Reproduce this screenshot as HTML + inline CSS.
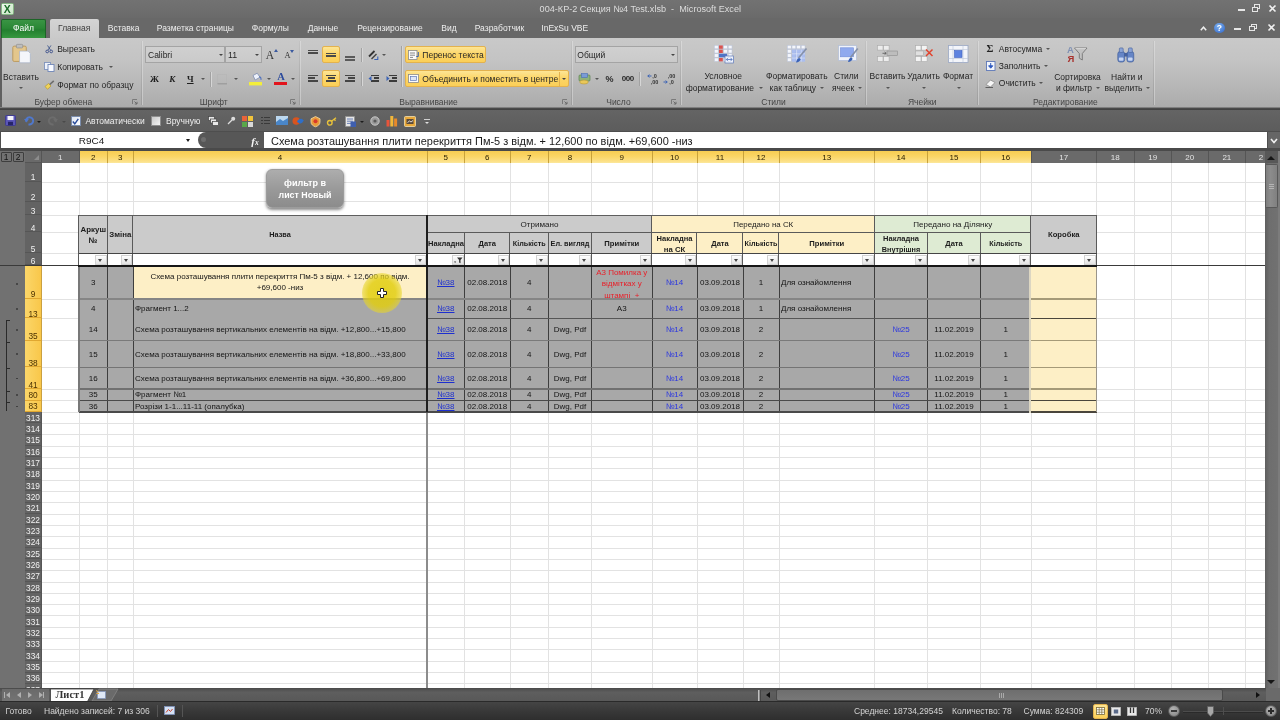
<!DOCTYPE html>
<html lang="ru"><head><meta charset="utf-8"><title>004-КР-2 Секция №4 Test.xlsb - Microsoft Excel</title>
<style>
*{box-sizing:border-box;margin:0;padding:0}
html,body{width:1280px;height:720px;overflow:hidden;background:#fff}
body{position:relative;font-family:"Liberation Sans",sans-serif;font-size:8.6px;color:#2a2a2a}
#app{position:absolute;left:0;top:0;width:1280px;height:720px;overflow:hidden;will-change:transform}
.a{position:absolute}
.t{position:absolute;white-space:nowrap}
svg{overflow:visible}
</style></head>
<body>
<div id="app">

<!-- title bar -->
<div class="a" style="left:0px;top:0px;width:1280px;height:18px;background:linear-gradient(#727272,#6a6a6a);"></div>
<div class="a" style="left:1px;top:2.500px;width:12.500px;height:12.500px;background:linear-gradient(135deg,#eef9ec,#c9e6c6);border:1px solid #86b884;border-radius:1.500px"></div>
<div class="t" style="left:7.3px;top:3.00px;line-height:12px;font-size:10.5px;color:#1b6a28;font-weight:bold;transform:translateX(-50%);">X</div>
<div class="t" style="left:640.3px;top:3.00px;line-height:12px;font-size:9.12px;color:#dcdcdc;transform:translateX(-50%);">004-КР-2 Секция №4 Test.xlsb  -  Microsoft Excel</div>
<div class="a" style="left:1238.0px;top:8.5px;width:7px;height:2px;background:#e6e6e6;"></div>
<div class="a" style="left:1254.0px;top:4px;width:6px;height:5px;border:1px solid #e6e6e6;border-top-width:1.5px"></div>
<div class="a" style="left:1252.0px;top:6.5px;width:6px;height:5px;border:1px solid #e6e6e6;border-top-width:1.5px;background:#6a6a6a"></div>
<svg class="a" style="left:1268.5px;top:4.5px;" width="7" height="7" viewBox="0 0 7 7"><path d="M0.5 0.5L6.5 6.5M6.5 0.5L0.5 6.5" stroke="#f0f0f0" stroke-width="1.6"/></svg>
<!-- ribbon tabs -->
<div class="a" style="left:0px;top:18px;width:1280px;height:20px;background:#686868;"></div>
<div class="a" style="left:0.5px;top:18.5px;width:45.500px;height:19.5px;border-radius:2px 2px 0 0;background:linear-gradient(#3a9444,#2b8836 45%,#237f2f 55%,#36983f);border:1px solid #1c6426;border-bottom:none"></div>
<div class="t" style="left:23.5px;top:22.30px;line-height:12px;font-size:8.5px;color:#fff;transform:translateX(-50%);">Файл</div>
<div class="a" style="left:50px;top:19px;width:48.5px;height:19.5px;border-radius:2px 2px 0 0;background:linear-gradient(#d4d4d4,#c9c9c9)"></div>
<div class="t" style="left:74.2px;top:22.30px;line-height:12px;font-size:8.5px;color:#3c3c3c;transform:translateX(-50%);">Главная</div>
<div class="t" style="left:123.65px;top:22.30px;line-height:12px;font-size:8.5px;color:#eeeeee;transform:translateX(-50%);">Вставка</div>
<div class="t" style="left:195.39999999999998px;top:22.30px;line-height:12px;font-size:8.5px;color:#eeeeee;transform:translateX(-50%);">Разметка страницы</div>
<div class="t" style="left:270.25px;top:22.30px;line-height:12px;font-size:8.5px;color:#eeeeee;transform:translateX(-50%);">Формулы</div>
<div class="t" style="left:323.0px;top:22.30px;line-height:12px;font-size:8.5px;color:#eeeeee;transform:translateX(-50%);">Данные</div>
<div class="t" style="left:390.0px;top:22.30px;line-height:12px;font-size:8.5px;color:#eeeeee;transform:translateX(-50%);">Рецензирование</div>
<div class="t" style="left:449.0px;top:22.30px;line-height:12px;font-size:8.5px;color:#eeeeee;transform:translateX(-50%);">Вид</div>
<div class="t" style="left:499.5px;top:22.30px;line-height:12px;font-size:8.5px;color:#eeeeee;transform:translateX(-50%);">Разработчик</div>
<div class="t" style="left:564.75px;top:22.30px;line-height:12px;font-size:8.5px;color:#eeeeee;transform:translateX(-50%);">InExSu VBE</div>
<svg class="a" style="left:1199.5px;top:25.5px;" width="7" height="5" viewBox="0 0 7 5"><path d="M0.8 4.2L3.5 1.2L6.2 4.2" stroke="#eee" stroke-width="1.5" fill="none"/></svg>
<div class="a" style="left:1214px;top:22.5px;width:10.5px;height:10.5px;border-radius:50%;background:radial-gradient(circle at 40% 30%,#7fb2ee,#2d63c8)"></div>
<div class="t" style="left:1219.3px;top:22.00px;line-height:12px;font-size:8.5px;color:#fff;font-weight:bold;transform:translateX(-50%);">?</div>
<div class="a" style="left:1233.5px;top:28.0px;width:7px;height:2px;background:#e6e6e6;"></div>
<div class="a" style="left:1251.0px;top:23.5px;width:6px;height:5px;border:1px solid #e6e6e6;border-top-width:1.5px"></div>
<div class="a" style="left:1249.0px;top:26.0px;width:6px;height:5px;border:1px solid #e6e6e6;border-top-width:1.5px;background:#6a6a6a"></div>
<svg class="a" style="left:1268.0px;top:24.0px;" width="7" height="7" viewBox="0 0 7 7"><path d="M0.5 0.5L6.5 6.5M6.5 0.5L0.5 6.5" stroke="#f0f0f0" stroke-width="1.6"/></svg>
<!-- ribbon -->
<div class="a" style="left:0px;top:38px;width:1280px;height:70px;background:linear-gradient(#c9c9c9,#c4c4c4 30%,#b6b6b6 70%,#ababab);"></div>
<div class="a" style="left:0px;top:106.5px;width:1280px;height:3.5px;background:linear-gradient(#9a9a9a,#4a4a4a 50%,#3e3e3e);"></div>
<div class="a" style="left:0px;top:38px;width:1.5px;height:69px;background:#606060;"></div>
<svg class="a" style="left:11px;top:42.5px;" width="23.4" height="21.6" viewBox="0 0 26 24"><rect x="2" y="3.5" width="15" height="17" rx="1.5" fill="#e3c68c" stroke="#b9965a" stroke-width="1"/><rect x="6" y="1.5" width="7" height="4" rx="1" fill="#bdbdbd" stroke="#8a8a8a" stroke-width=".7"/><path d="M9.5 9h9.5l2.5 2.5V22h-12z" fill="#f4f6fa" stroke="#a9b4c6" stroke-width=".8"/></svg>
<div class="t" style="left:21px;top:70.80px;line-height:12px;font-size:8.5px;color:#262626;transform:translateX(-50%);">Вставить</div>
<div class="a" style="left:19px;top:87.00px;width:0;height:0;border-left:2px solid transparent;border-right:2px solid transparent;border-top:2.5px solid #555"></div>
<svg class="a" style="left:44.5px;top:44.5px;" width="8.5" height="8.5" viewBox="0 0 10 10"><path d="M3 0.5L6.5 6M7 0.5L3.5 6" stroke="#4a5f90" stroke-width="1.1" fill="none"/><circle cx="2.6" cy="7.6" r="1.6" fill="none" stroke="#3c4f8a" stroke-width="1.1"/><circle cx="7.3" cy="7.6" r="1.6" fill="none" stroke="#3c4f8a" stroke-width="1.1"/></svg>
<div class="t" style="left:57.2px;top:43.00px;line-height:12px;font-size:8.5px;color:#262626;">Вырезать</div>
<svg class="a" style="left:43.5px;top:62px;" width="11" height="10" viewBox="0 0 11 10"><rect x="0.5" y="0.5" width="6" height="7" fill="#eef2fa" stroke="#7f93bd" stroke-width=".9"/><rect x="4" y="2.5" width="6" height="7" fill="#f8faff" stroke="#6f86b8" stroke-width=".9"/></svg>
<div class="t" style="left:57.2px;top:61.00px;line-height:12px;font-size:8.5px;color:#262626;">Копировать</div>
<div class="a" style="left:109px;top:66.30px;width:0;height:0;border-left:2px solid transparent;border-right:2px solid transparent;border-top:2.5px solid #555"></div>
<svg class="a" style="left:43.5px;top:80px;" width="11" height="10" viewBox="0 0 11 10"><path d="M9.8 0.8L5.2 5" stroke="#6d6d6d" stroke-width="1.6"/><path d="M1 6.5L4.5 3.5L7 6L3.5 9.3z" fill="#f0d35a" stroke="#b89a2e" stroke-width=".7"/></svg>
<div class="t" style="left:57.2px;top:79.00px;line-height:12px;font-size:8.5px;color:#262626;">Формат по образцу</div>
<div class="t" style="left:63.35px;top:95.60px;line-height:12px;font-size:8.5px;color:#444444;transform:translateX(-50%);">Буфер обмена</div>
<svg class="a" style="left:132px;top:98.5px;" width="6" height="6" viewBox="0 0 6 6"><path d="M0.5 5V0.5H5" stroke="#7a7a7a" fill="none" stroke-width="1"/><path d="M2.5 2.5L5 5M5 2.8V5H2.8" stroke="#6a6a6a" fill="none" stroke-width="1"/></svg>
<div class="a" style="left:140.5px;top:41px;width:1px;height:64px;background:linear-gradient(#c2c2c2,#9c9c9c);"></div>
<div class="a" style="left:141.5px;top:41px;width:1px;height:64px;background:linear-gradient(#d8d8d8,#c6c6c6);"></div>
<div class="a" style="left:145.3px;top:46.3px;width:80px;height:17px;background:linear-gradient(#d0d0d0,#cacaca);border:1px solid #a4a4a4"></div>
<div class="a" style="left:224.8px;top:46.3px;width:37px;height:17px;background:linear-gradient(#d0d0d0,#cacaca);border:1px solid #a4a4a4"></div>
<div class="t" style="left:148px;top:48.80px;line-height:12px;font-size:8.5px;color:#262626;">Calibri</div>
<div class="a" style="left:218.5px;top:54.00px;width:0;height:0;border-left:2px solid transparent;border-right:2px solid transparent;border-top:2.5px solid #444"></div>
<div class="t" style="left:228px;top:48.80px;line-height:12px;font-size:8.8px;color:#262626;">11</div>
<div class="a" style="left:255px;top:54.00px;width:0;height:0;border-left:2px solid transparent;border-right:2px solid transparent;border-top:2.5px solid #444"></div>
<div class="t" style="left:270px;top:49.30px;line-height:12px;font-size:11.5px;color:#333;transform:translateX(-50%);font-family:'Liberation Serif',serif;">A</div>
<svg class="a" style="left:273.5px;top:49px;" width="4" height="3" viewBox="0 0 4 3"><path d="M0 3L2 0L4 3z" fill="#3b5aa0"/></svg>
<div class="t" style="left:287.5px;top:50.30px;line-height:12px;font-size:8.3px;color:#333;transform:translateX(-50%);font-family:'Liberation Serif',serif;">A</div>
<svg class="a" style="left:290.3px;top:49.5px;" width="4" height="3" viewBox="0 0 4 3"><path d="M0 0L2 3L4 0z" fill="#3b5aa0"/></svg>
<div class="t" style="left:154.5px;top:72.80px;line-height:12px;font-size:9px;color:#1e1e1e;font-weight:bold;transform:translateX(-50%);font-family:'Liberation Serif',serif;">Ж</div>
<div class="t" style="left:172.3px;top:72.80px;line-height:12px;font-size:9px;color:#1e1e1e;font-weight:bold;transform:translateX(-50%);font-family:'Liberation Serif',serif;font-style:italic;">К</div>
<div class="t" style="left:190.3px;top:72.80px;line-height:12px;font-size:9px;color:#1e1e1e;font-weight:bold;transform:translateX(-50%);font-family:'Liberation Serif',serif;text-decoration:underline;">Ч</div>
<div class="a" style="left:201px;top:78.30px;width:0;height:0;border-left:2px solid transparent;border-right:2px solid transparent;border-top:2.5px solid #555"></div>
<div class="a" style="left:210.0px;top:72px;width:1px;height:15px;background:#a2a2a2;"></div>
<div class="a" style="left:211.0px;top:72px;width:1px;height:15px;background:#d6d6d6;"></div>
<svg class="a" style="left:217px;top:73.5px;" width="11" height="11" viewBox="0 0 11 11"><rect x="0.5" y="0.5" width="9" height="9" fill="none" stroke="#b0b0b0" stroke-dasharray="1 1" stroke-width=".8"/><path d="M0.5 9.8H10" stroke="#9a9a9a" stroke-width="1.2"/></svg>
<div class="a" style="left:234px;top:78.30px;width:0;height:0;border-left:2px solid transparent;border-right:2px solid transparent;border-top:2.5px solid #555"></div>
<svg class="a" style="left:249px;top:72px;" width="14" height="14" viewBox="0 0 14 14"><path d="M4 3.5L8.2 1.2L11 5.2L6.2 8z" fill="#eef2fb" stroke="#7d8db0" stroke-width=".8"/><path d="M10.5 4.5c1.4 1 1.8 2.3 1.5 3.4" stroke="#4b6fc0" stroke-width="1.1" fill="none"/><rect x="0" y="10" width="13" height="3.4" fill="#f3ee3a"/></svg>
<div class="a" style="left:266.5px;top:78.30px;width:0;height:0;border-left:2px solid transparent;border-right:2px solid transparent;border-top:2.5px solid #555"></div>
<div class="t" style="left:281px;top:71.30px;line-height:12px;font-size:10.5px;color:#2b4a9c;font-weight:bold;transform:translateX(-50%);font-family:'Liberation Serif',serif;">A</div>
<div class="a" style="left:274.3px;top:82px;width:13px;height:3.4px;background:#e2141c;"></div>
<div class="a" style="left:291.3px;top:78.30px;width:0;height:0;border-left:2px solid transparent;border-right:2px solid transparent;border-top:2.5px solid #555"></div>
<div class="t" style="left:213.7px;top:95.60px;line-height:12px;font-size:8.5px;color:#444444;transform:translateX(-50%);">Шрифт</div>
<svg class="a" style="left:290px;top:98.5px;" width="6" height="6" viewBox="0 0 6 6"><path d="M0.5 5V0.5H5" stroke="#7a7a7a" fill="none" stroke-width="1"/><path d="M2.5 2.5L5 5M5 2.8V5H2.8" stroke="#6a6a6a" fill="none" stroke-width="1"/></svg>
<div class="a" style="left:299.0px;top:41px;width:1px;height:64px;background:linear-gradient(#c2c2c2,#9c9c9c);"></div>
<div class="a" style="left:300.0px;top:41px;width:1px;height:64px;background:linear-gradient(#d8d8d8,#c6c6c6);"></div>
<div class="a" style="left:321.8px;top:46.3px;width:18.5px;height:17px;background:linear-gradient(#fde595,#fcd566 50%,#fbcf58);border:1px solid #e3b24e;border-radius:2px"></div>
<div class="a" style="left:321.8px;top:70.3px;width:18.5px;height:17px;background:linear-gradient(#fde595,#fcd566 50%,#fbcf58);border:1px solid #e3b24e;border-radius:2px"></div>
<div class="a" style="left:308px;top:49.5px;width:10px;height:1.8px;background:#4a4a4a;"></div>
<div class="a" style="left:308px;top:52.3px;width:10px;height:1.8px;background:#4a4a4a;"></div>
<div class="a" style="left:326px;top:52.5px;width:10px;height:1.8px;background:#4a4a4a;"></div>
<div class="a" style="left:326px;top:55.3px;width:10px;height:1.8px;background:#4a4a4a;"></div>
<div class="a" style="left:345px;top:56px;width:10px;height:1.8px;background:#5a5a5a;"></div>
<div class="a" style="left:345px;top:58.8px;width:10px;height:1.8px;background:#5a5a5a;"></div>
<div class="a" style="left:360.5px;top:48px;width:1px;height:14px;background:#a2a2a2;"></div>
<div class="a" style="left:361.5px;top:48px;width:1px;height:14px;background:#d6d6d6;"></div>
<svg class="a" style="left:368px;top:49.5px;" width="11" height="10" viewBox="0 0 11 10"><path d="M1 6.500L6.500 1" stroke="#333" stroke-width="1.800"/><path d="M3.500 9L8.500 4" stroke="#444" stroke-width="1.500"/><path d="M6.3 9.5h3.5v-3" stroke="#3a62b5" stroke-width="1.1" fill="none"/></svg>
<div class="a" style="left:381.5px;top:54.00px;width:0;height:0;border-left:2px solid transparent;border-right:2px solid transparent;border-top:2.5px solid #555"></div>
<div class="a" style="left:308px;top:74.5px;width:10px;height:1.7px;background:#454545;"></div>
<div class="a" style="left:308px;top:77.4px;width:7px;height:1.7px;background:#454545;"></div>
<div class="a" style="left:308px;top:80.3px;width:10px;height:1.7px;background:#454545;"></div>
<div class="a" style="left:326px;top:74.5px;width:10px;height:1.7px;background:#454545;"></div>
<div class="a" style="left:327.5px;top:77.4px;width:7px;height:1.7px;background:#454545;"></div>
<div class="a" style="left:326px;top:80.3px;width:10px;height:1.7px;background:#454545;"></div>
<div class="a" style="left:345px;top:74.5px;width:10px;height:1.7px;background:#454545;"></div>
<div class="a" style="left:348px;top:77.4px;width:7px;height:1.7px;background:#454545;"></div>
<div class="a" style="left:345px;top:80.3px;width:10px;height:1.7px;background:#454545;"></div>
<div class="a" style="left:360.5px;top:72px;width:1px;height:14px;background:#a2a2a2;"></div>
<div class="a" style="left:361.5px;top:72px;width:1px;height:14px;background:#d6d6d6;"></div>
<div class="a" style="left:371px;top:74.5px;width:8px;height:1.7px;background:#3a3a3a;"></div>
<div class="a" style="left:374px;top:77.4px;width:5px;height:1.7px;background:#3a3a3a;"></div>
<div class="a" style="left:371px;top:80.3px;width:8px;height:1.7px;background:#3a3a3a;"></div>
<svg class="a" style="left:367.5px;top:76px;" width="4" height="5" viewBox="0 0 4 5"><path d="M3.5 0L0.5 2.5L3.5 5z" fill="#3a62b5"/></svg>
<div class="a" style="left:388.5px;top:74.5px;width:8px;height:1.7px;background:#3a3a3a;"></div>
<div class="a" style="left:391.5px;top:77.4px;width:5px;height:1.7px;background:#3a3a3a;"></div>
<div class="a" style="left:388.5px;top:80.3px;width:8px;height:1.7px;background:#3a3a3a;"></div>
<svg class="a" style="left:385.5px;top:76px;" width="4" height="5" viewBox="0 0 4 5"><path d="M0.5 0L3.5 2.5L0.5 5z" fill="#3a62b5"/></svg>
<div class="a" style="left:400.8px;top:46px;width:1px;height:41px;background:#a2a2a2;"></div>
<div class="a" style="left:401.8px;top:46px;width:1px;height:41px;background:#d6d6d6;"></div>
<div class="a" style="left:405px;top:46.3px;width:80.5px;height:17px;background:linear-gradient(#fde595,#fcd566 50%,#fbcf58);border:1px solid #e3b24e;border-radius:2px"></div>
<svg class="a" style="left:408px;top:49.5px;" width="11" height="10" viewBox="0 0 11 10"><rect x="0.5" y="0.5" width="8.5" height="9" fill="#fbfbfb" stroke="#8a8a8a" stroke-width=".8"/><path d="M2 3h5M2 5.2h5M2 7.4h3" stroke="#6a6a6a" stroke-width=".8"/><path d="M10.3 2v4.5h-2" stroke="#3a62b5" stroke-width="1" fill="none"/></svg>
<div class="t" style="left:422.3px;top:48.80px;line-height:12px;font-size:8.5px;color:#262626;">Перенос текста</div>
<div class="a" style="left:405px;top:70.3px;width:163.5px;height:17px;background:linear-gradient(#fde595,#fcd566 50%,#fbcf58);border:1px solid #e3b24e;border-radius:2px"></div>
<div class="a" style="left:559.3px;top:71.5px;width:1px;height:14.5px;background:#e3b24e;"></div>
<svg class="a" style="left:408px;top:74px;" width="11" height="9" viewBox="0 0 11 9"><rect x="0.5" y="0.5" width="10" height="8" fill="#fbfbfb" stroke="#8a8a8a" stroke-width=".8"/><rect x="2.5" y="2.5" width="6" height="4" fill="#dfe6f5" stroke="#5d78b8" stroke-width=".7"/></svg>
<div class="t" style="left:422.3px;top:72.80px;line-height:12px;font-size:8.5px;color:#262626;">Объединить и поместить в центре</div>
<div class="a" style="left:562px;top:78.30px;width:0;height:0;border-left:2px solid transparent;border-right:2px solid transparent;border-top:2.5px solid #444"></div>
<div class="t" style="left:428.5px;top:95.60px;line-height:12px;font-size:8.5px;color:#444444;transform:translateX(-50%);">Выравнивание</div>
<svg class="a" style="left:561.5px;top:98.5px;" width="6" height="6" viewBox="0 0 6 6"><path d="M0.5 5V0.5H5" stroke="#7a7a7a" fill="none" stroke-width="1"/><path d="M2.5 2.5L5 5M5 2.8V5H2.8" stroke="#6a6a6a" fill="none" stroke-width="1"/></svg>
<div class="a" style="left:570.5px;top:41px;width:1px;height:64px;background:linear-gradient(#c2c2c2,#9c9c9c);"></div>
<div class="a" style="left:571.5px;top:41px;width:1px;height:64px;background:linear-gradient(#d8d8d8,#c6c6c6);"></div>
<div class="a" style="left:574.6px;top:46.3px;width:103.2px;height:17px;background:linear-gradient(#d0d0d0,#cacaca);border:1px solid #a4a4a4"></div>
<div class="t" style="left:577.3px;top:48.80px;line-height:12px;font-size:8.5px;color:#262626;">Общий</div>
<div class="a" style="left:671px;top:54.00px;width:0;height:0;border-left:2px solid transparent;border-right:2px solid transparent;border-top:2.5px solid #444"></div>
<svg class="a" style="left:578px;top:72.5px;" width="13" height="12" viewBox="0 0 13 12"><rect x="1" y="2" width="11" height="6" rx="1" fill="#8fb27a" stroke="#5d8450" stroke-width=".7"/><ellipse cx="6" cy="9" rx="4.3" ry="2" fill="#e9c85a" stroke="#b7973a" stroke-width=".6"/><rect x="3.5" y="0.5" width="6" height="4" fill="#7a9bd6" stroke="#4a6fb5" stroke-width=".6"/></svg>
<div class="a" style="left:594.5px;top:78.30px;width:0;height:0;border-left:2px solid transparent;border-right:2px solid transparent;border-top:2.5px solid #555"></div>
<div class="t" style="left:609.5px;top:73.00px;line-height:12px;font-size:9px;color:#2a2a2a;font-weight:bold;transform:translateX(-50%);">%</div>
<div class="t" style="left:627.7px;top:73.00px;line-height:12px;font-size:8px;color:#2a2a2a;font-weight:bold;transform:translateX(-50%);letter-spacing:-0.5px;">000</div>
<div class="a" style="left:638.8px;top:72px;width:1px;height:14px;background:#a2a2a2;"></div>
<div class="a" style="left:639.8px;top:72px;width:1px;height:14px;background:#d6d6d6;"></div>
<div class="t" style="left:654.5px;top:70.30px;line-height:12px;font-size:5.5px;color:#333;font-weight:bold;transform:translateX(-50%);">,0</div>
<div class="t" style="left:654.5px;top:76.00px;line-height:12px;font-size:5.5px;color:#333;font-weight:bold;transform:translateX(-50%);">,00</div>
<svg class="a" style="left:646.5px;top:74px;" width="5" height="4" viewBox="0 0 5 4"><path d="M4.5 2H0.8M2.3 0.5L0.8 2L2.3 3.5" stroke="#3a62b5" stroke-width="1" fill="none"/></svg>
<div class="t" style="left:671.5px;top:70.30px;line-height:12px;font-size:5.5px;color:#333;font-weight:bold;transform:translateX(-50%);">,00</div>
<div class="t" style="left:671.5px;top:76.00px;line-height:12px;font-size:5.5px;color:#333;font-weight:bold;transform:translateX(-50%);">,0</div>
<svg class="a" style="left:663px;top:80px;" width="5" height="4" viewBox="0 0 5 4"><path d="M0.5 2H4.2M2.7 0.5L4.2 2L2.7 3.5" stroke="#3a62b5" stroke-width="1" fill="none"/></svg>
<div class="t" style="left:618.45px;top:95.60px;line-height:12px;font-size:8.5px;color:#444444;transform:translateX(-50%);">Число</div>
<svg class="a" style="left:670.5px;top:98.5px;" width="6" height="6" viewBox="0 0 6 6"><path d="M0.5 5V0.5H5" stroke="#7a7a7a" fill="none" stroke-width="1"/><path d="M2.5 2.5L5 5M5 2.8V5H2.8" stroke="#6a6a6a" fill="none" stroke-width="1"/></svg>
<div class="a" style="left:680.1px;top:41px;width:1px;height:64px;background:linear-gradient(#c2c2c2,#9c9c9c);"></div>
<div class="a" style="left:681.1px;top:41px;width:1px;height:64px;background:linear-gradient(#d8d8d8,#c6c6c6);"></div>
<svg class="a" style="left:713.5px;top:45px;" width="20" height="19" viewBox="0 0 20 19"><rect x="0.4" y="0.4" width="3.8" height="3.4" fill="#f4f6fb" stroke="#b9c3d9" stroke-width=".5"/><rect x="5.0" y="0.4" width="3.8" height="3.4" fill="#f4f6fb" stroke="#b9c3d9" stroke-width=".5"/><rect x="9.6" y="0.4" width="3.8" height="3.4" fill="#f4f6fb" stroke="#b9c3d9" stroke-width=".5"/><rect x="14.2" y="0.4" width="3.8" height="3.4" fill="#f4f6fb" stroke="#b9c3d9" stroke-width=".5"/><rect x="0.4" y="4.6" width="3.8" height="3.4" fill="#f4f6fb" stroke="#b9c3d9" stroke-width=".5"/><rect x="5.0" y="4.6" width="3.8" height="3.4" fill="#f4f6fb" stroke="#b9c3d9" stroke-width=".5"/><rect x="9.6" y="4.6" width="3.8" height="3.4" fill="#f4f6fb" stroke="#b9c3d9" stroke-width=".5"/><rect x="14.2" y="4.6" width="3.8" height="3.4" fill="#f4f6fb" stroke="#b9c3d9" stroke-width=".5"/><rect x="0.4" y="8.8" width="3.8" height="3.4" fill="#f4f6fb" stroke="#b9c3d9" stroke-width=".5"/><rect x="5.0" y="8.8" width="3.8" height="3.4" fill="#f4f6fb" stroke="#b9c3d9" stroke-width=".5"/><rect x="9.6" y="8.8" width="3.8" height="3.4" fill="#f4f6fb" stroke="#b9c3d9" stroke-width=".5"/><rect x="14.2" y="8.8" width="3.8" height="3.4" fill="#f4f6fb" stroke="#b9c3d9" stroke-width=".5"/><rect x="0.4" y="13.0" width="3.8" height="3.4" fill="#f4f6fb" stroke="#b9c3d9" stroke-width=".5"/><rect x="5.0" y="13.0" width="3.8" height="3.4" fill="#f4f6fb" stroke="#b9c3d9" stroke-width=".5"/><rect x="9.6" y="13.0" width="3.8" height="3.4" fill="#f4f6fb" stroke="#b9c3d9" stroke-width=".5"/><rect x="14.2" y="13.0" width="3.8" height="3.4" fill="#f4f6fb" stroke="#b9c3d9" stroke-width=".5"/><rect x="5" y="0.4" width="3.8" height="3.4" fill="#d9534f"/><rect x="5" y="4.6" width="3.8" height="3.4" fill="#d9534f"/><rect x="5" y="8.8" width="8" height="3.4" fill="#4f74c8"/><rect x="5" y="13" width="3.8" height="3.4" fill="#d9534f"/><rect x="11" y="11" width="8.5" height="7" fill="#eef2fb" stroke="#5d78b8" stroke-width=".7"/><path d="M12.5 14.5h5.5M14 12.8l-1.6 1.7 1.6 1.7M16.5 12.8l1.6 1.7-1.6 1.7" stroke="#3a62b5" stroke-width=".7" fill="none"/></svg>
<div class="t" style="left:723.2px;top:70.40px;line-height:12px;font-size:8.5px;color:#262626;transform:translateX(-50%);">Условное</div>
<div class="t" style="left:719.8px;top:81.70px;line-height:12px;font-size:8.5px;color:#262626;transform:translateX(-50%);">форматирование</div>
<div class="a" style="left:758.5px;top:87.00px;width:0;height:0;border-left:2px solid transparent;border-right:2px solid transparent;border-top:2.5px solid #555"></div>
<svg class="a" style="left:787px;top:45px;" width="21" height="19" viewBox="0 0 21 19"><rect x="0.4" y="0.4" width="3.8" height="3.4" fill="#f4f6fb" stroke="#b9c3d9" stroke-width=".5"/><rect x="5.0" y="0.4" width="3.8" height="3.4" fill="#f4f6fb" stroke="#b9c3d9" stroke-width=".5"/><rect x="9.6" y="0.4" width="3.8" height="3.4" fill="#f4f6fb" stroke="#b9c3d9" stroke-width=".5"/><rect x="14.2" y="0.4" width="3.8" height="3.4" fill="#f4f6fb" stroke="#b9c3d9" stroke-width=".5"/><rect x="0.4" y="4.6" width="3.8" height="3.4" fill="#f4f6fb" stroke="#b9c3d9" stroke-width=".5"/><rect x="5.0" y="4.6" width="3.8" height="3.4" fill="#f4f6fb" stroke="#b9c3d9" stroke-width=".5"/><rect x="9.6" y="4.6" width="3.8" height="3.4" fill="#f4f6fb" stroke="#b9c3d9" stroke-width=".5"/><rect x="14.2" y="4.6" width="3.8" height="3.4" fill="#f4f6fb" stroke="#b9c3d9" stroke-width=".5"/><rect x="0.4" y="8.8" width="3.8" height="3.4" fill="#f4f6fb" stroke="#b9c3d9" stroke-width=".5"/><rect x="5.0" y="8.8" width="3.8" height="3.4" fill="#f4f6fb" stroke="#b9c3d9" stroke-width=".5"/><rect x="9.6" y="8.8" width="3.8" height="3.4" fill="#f4f6fb" stroke="#b9c3d9" stroke-width=".5"/><rect x="14.2" y="8.8" width="3.8" height="3.4" fill="#f4f6fb" stroke="#b9c3d9" stroke-width=".5"/><rect x="0.4" y="13.0" width="3.8" height="3.4" fill="#f4f6fb" stroke="#b9c3d9" stroke-width=".5"/><rect x="5.0" y="13.0" width="3.8" height="3.4" fill="#f4f6fb" stroke="#b9c3d9" stroke-width=".5"/><rect x="9.6" y="13.0" width="3.8" height="3.4" fill="#f4f6fb" stroke="#b9c3d9" stroke-width=".5"/><rect x="14.2" y="13.0" width="3.8" height="3.4" fill="#f4f6fb" stroke="#b9c3d9" stroke-width=".5"/><rect x="5" y="4.600" width="13" height="12" fill="#9fb4ec" opacity=".85"/><path d="M5 8.800h13M5 13h13M9.600 4.600v12M14.200 4.600v12" stroke="#e8eefc" stroke-width=".6"/><path d="M19.5 3.5L11.5 13" stroke="#8590a8" stroke-width="1.7"/><path d="M9 17.5c0.5-2.5 1.5-4 3.2-4.6l1.5 1.3c-0.8 1.8-2.2 3-4.7 3.3z" fill="#3a62b5"/></svg>
<div class="t" style="left:796.8px;top:70.40px;line-height:12px;font-size:8.5px;color:#262626;transform:translateX(-50%);">Форматировать</div>
<div class="t" style="left:792.8px;top:81.70px;line-height:12px;font-size:8.5px;color:#262626;transform:translateX(-50%);">как таблицу</div>
<div class="a" style="left:820px;top:87.00px;width:0;height:0;border-left:2px solid transparent;border-right:2px solid transparent;border-top:2.5px solid #555"></div>
<svg class="a" style="left:837.5px;top:45px;" width="21" height="19" viewBox="0 0 21 19"><rect x="0.5" y="0.5" width="18" height="15" fill="#f0f3fb" stroke="#b5c0d8" stroke-width=".8"/><rect x="2.5" y="2.8" width="13" height="9" fill="#8fa9ee" stroke="#6f8ad6" stroke-width=".6"/><path d="M19.8 3.5L12.5 12.5" stroke="#8590a8" stroke-width="1.7"/><path d="M10 17c0.5-2.5 1.5-4 3.2-4.6l1.5 1.3c-0.8 1.8-2.2 3-4.7 3.3z" fill="#3a62b5"/></svg>
<div class="t" style="left:846.3px;top:70.40px;line-height:12px;font-size:8.5px;color:#262626;transform:translateX(-50%);">Стили</div>
<div class="t" style="left:843px;top:81.70px;line-height:12px;font-size:8.5px;color:#262626;transform:translateX(-50%);">ячеек</div>
<div class="a" style="left:858px;top:87.00px;width:0;height:0;border-left:2px solid transparent;border-right:2px solid transparent;border-top:2.5px solid #555"></div>
<div class="t" style="left:773.5px;top:95.60px;line-height:12px;font-size:8.5px;color:#444444;transform:translateX(-50%);">Стили</div>
<div class="a" style="left:865.2px;top:41px;width:1px;height:64px;background:linear-gradient(#c2c2c2,#9c9c9c);"></div>
<div class="a" style="left:866.2px;top:41px;width:1px;height:64px;background:linear-gradient(#d8d8d8,#c6c6c6);"></div>
<svg class="a" style="left:877px;top:45px;" width="22" height="18" viewBox="0 0 22 18"><rect x="0.5" y="0.5" width="5.5" height="4.6" fill="#ececec" stroke="#aaa" stroke-width=".6"/><rect x="6.6" y="0.5" width="5.5" height="4.6" fill="#ececec" stroke="#aaa" stroke-width=".6"/><rect x="0.5" y="11.5" width="5.5" height="5" fill="#ececec" stroke="#aaa" stroke-width=".6"/><rect x="6.6" y="11.5" width="5.5" height="5" fill="#ececec" stroke="#aaa" stroke-width=".6"/><rect x="10" y="6" width="10.5" height="4.6" fill="#bdbdbd" stroke="#8e8e8e" stroke-width=".6"/><path d="M5.5 8.3h3.5M7.6 7l1.6 1.3-1.6 1.3" stroke="#555" stroke-width=".8" fill="none"/></svg>
<div class="t" style="left:887.5px;top:70.40px;line-height:12px;font-size:8.5px;color:#262626;transform:translateX(-50%);">Вставить</div>
<div class="a" style="left:886px;top:87.00px;width:0;height:0;border-left:2px solid transparent;border-right:2px solid transparent;border-top:2.5px solid #555"></div>
<svg class="a" style="left:915px;top:45px;" width="20" height="18" viewBox="0 0 20 18"><rect x="0.5" y="0.5" width="5.5" height="4.6" fill="#f4f4f4" stroke="#aaa" stroke-width=".6"/><rect x="6.6" y="0.5" width="5.5" height="4.6" fill="#f4f4f4" stroke="#aaa" stroke-width=".6"/><rect x="0.5" y="11.5" width="5.5" height="5" fill="#f4f4f4" stroke="#aaa" stroke-width=".6"/><rect x="6.6" y="11.5" width="5.5" height="5" fill="#f4f4f4" stroke="#aaa" stroke-width=".6"/><rect x="0.5" y="6" width="8" height="4.6" fill="#e0e0e0" stroke="#aaa" stroke-width=".6"/><path d="M11 4.5L17.5 11M17.5 4.5L11 11" stroke="#e0442e" stroke-width="1.5"/></svg>
<div class="t" style="left:923.6px;top:70.40px;line-height:12px;font-size:8.5px;color:#262626;transform:translateX(-50%);">Удалить</div>
<div class="a" style="left:922px;top:87.00px;width:0;height:0;border-left:2px solid transparent;border-right:2px solid transparent;border-top:2.5px solid #555"></div>
<svg class="a" style="left:948px;top:44.5px;" width="21" height="19" viewBox="0 0 21 19"><rect x="0.5" y="0.5" width="19.5" height="17" fill="#f3f5fa" stroke="#9aa7c4" stroke-width=".8"/><path d="M0.5 4.5H20M0.5 13.5H20M5 0.5V17.5M15 0.5V17.5" stroke="#b9c3d9" stroke-width=".6"/><rect x="6.5" y="5.5" width="7.5" height="7" fill="#5d82e0" stroke="#3f62c0" stroke-width=".6"/></svg>
<div class="t" style="left:958px;top:70.40px;line-height:12px;font-size:8.5px;color:#262626;transform:translateX(-50%);">Формат</div>
<div class="a" style="left:956.5px;top:87.00px;width:0;height:0;border-left:2px solid transparent;border-right:2px solid transparent;border-top:2.5px solid #555"></div>
<div class="t" style="left:922.2px;top:95.60px;line-height:12px;font-size:8.5px;color:#444444;transform:translateX(-50%);">Ячейки</div>
<div class="a" style="left:977.1px;top:41px;width:1px;height:64px;background:linear-gradient(#c2c2c2,#9c9c9c);"></div>
<div class="a" style="left:978.1px;top:41px;width:1px;height:64px;background:linear-gradient(#d8d8d8,#c6c6c6);"></div>
<div class="t" style="left:990px;top:42.60px;line-height:12px;font-size:10.5px;color:#222;font-weight:bold;transform:translateX(-50%);font-family:'Liberation Serif',serif;">Σ</div>
<div class="t" style="left:998.8px;top:42.60px;line-height:12px;font-size:8.5px;color:#262626;">Автосумма</div>
<div class="a" style="left:1045.5px;top:48.00px;width:0;height:0;border-left:2px solid transparent;border-right:2px solid transparent;border-top:2.5px solid #555"></div>
<svg class="a" style="left:985.5px;top:60.5px;" width="10" height="10" viewBox="0 0 10 10"><rect x="0.5" y="0.5" width="8.5" height="9" fill="#f3f6fc" stroke="#5d78b8" stroke-width=".9"/><path d="M4.7 2v4M2.6 4.8l2.1 2.4 2.1-2.4z" stroke="#2f5ac0" stroke-width="1" fill="#2f5ac0"/></svg>
<div class="t" style="left:998.8px;top:59.70px;line-height:12px;font-size:8.5px;color:#262626;">Заполнить</div>
<div class="a" style="left:1043.5px;top:65.00px;width:0;height:0;border-left:2px solid transparent;border-right:2px solid transparent;border-top:2.5px solid #555"></div>
<svg class="a" style="left:985px;top:78.5px;" width="11" height="9" viewBox="0 0 11 9"><path d="M1 5.5L5.5 1L10 3.5L5.5 8z" fill="#f7f7f7" stroke="#8a8a8a" stroke-width=".8"/><path d="M0.5 8.5H8" stroke="#555" stroke-width=".9"/></svg>
<div class="t" style="left:998.8px;top:77.00px;line-height:12px;font-size:8.5px;color:#262626;">Очистить</div>
<div class="a" style="left:1038.5px;top:82.30px;width:0;height:0;border-left:2px solid transparent;border-right:2px solid transparent;border-top:2.5px solid #555"></div>
<div class="t" style="left:1070.5px;top:44.30px;line-height:12px;font-size:9.5px;color:#7f90b4;font-weight:bold;transform:translateX(-50%);">А</div>
<div class="t" style="left:1070.8px;top:53.30px;line-height:12px;font-size:9.5px;color:#a8322e;font-weight:bold;transform:translateX(-50%);">Я</div>
<svg class="a" style="left:1074px;top:47px;" width="14" height="16" viewBox="0 0 14 16"><path d="M0.5 1h12.5l-4.7 5.5v6.500l-3 -1.800V6.5z" fill="#c2c2c2" stroke="#7c7c7c" stroke-width="1"/><path d="M1.500 1.600h10.500" stroke="#e8e8e8" stroke-width=".8"/></svg>
<div class="t" style="left:1077.5px;top:70.50px;line-height:12px;font-size:8.5px;color:#262626;transform:translateX(-50%);">Сортировка</div>
<div class="t" style="left:1074px;top:81.70px;line-height:12px;font-size:8.5px;color:#262626;transform:translateX(-50%);">и фильтр</div>
<div class="a" style="left:1095.5px;top:87.00px;width:0;height:0;border-left:2px solid transparent;border-right:2px solid transparent;border-top:2.5px solid #555"></div>
<svg class="a" style="left:1115.5px;top:46.5px;" width="20" height="16.4" viewBox="0 0 22 18"><rect x="2" y="5" width="7.5" height="11.5" rx="2.5" fill="#6585c6" stroke="#44609c" stroke-width=".8"/><rect x="12" y="5" width="7.5" height="11.5" rx="2.5" fill="#6585c6" stroke="#44609c" stroke-width=".8"/><rect x="3.7" y="1" width="4.2" height="5" rx="1" fill="#8aa3d6" stroke="#44609c" stroke-width=".7"/><rect x="13.7" y="1" width="4.2" height="5" rx="1" fill="#8aa3d6" stroke="#44609c" stroke-width=".7"/><rect x="8.8" y="6.5" width="4" height="4" fill="#46629e"/><rect x="3.2" y="11.5" width="5" height="3.6" rx="1" fill="#c7d6f3"/><rect x="13.2" y="11.5" width="5" height="3.6" rx="1" fill="#c7d6f3"/></svg>
<div class="t" style="left:1126.8px;top:70.50px;line-height:12px;font-size:8.5px;color:#262626;transform:translateX(-50%);">Найти и</div>
<div class="t" style="left:1123.5px;top:81.70px;line-height:12px;font-size:8.5px;color:#262626;transform:translateX(-50%);">выделить</div>
<div class="a" style="left:1145.5px;top:87.00px;width:0;height:0;border-left:2px solid transparent;border-right:2px solid transparent;border-top:2.5px solid #555"></div>
<div class="t" style="left:1065.35px;top:95.60px;line-height:12px;font-size:8.5px;color:#444444;transform:translateX(-50%);">Редактирование</div>
<div class="a" style="left:1152.5px;top:41px;width:1px;height:64px;background:linear-gradient(#c2c2c2,#9c9c9c);"></div>
<div class="a" style="left:1153.5px;top:41px;width:1px;height:64px;background:linear-gradient(#d8d8d8,#c6c6c6);"></div>
<!-- quick access toolbar -->
<div class="a" style="left:0px;top:109.5px;width:1280px;height:22.5px;background:linear-gradient(#646464,#5c5c5c);"></div>
<svg class="a" style="left:4.5px;top:115px;" width="11" height="11" viewBox="0 0 11 11"><rect x="0.5" y="0.5" width="10" height="10" rx="1" fill="#5b56b8" stroke="#3a3690" stroke-width=".8"/><rect x="2.5" y="1" width="6" height="4" fill="#f2f2fa"/><rect x="3" y="6.8" width="5" height="3.4" fill="#26246a"/></svg>
<svg class="a" style="left:23.5px;top:115.5px;" width="10" height="9" viewBox="0 0 10 9"><path d="M2 5.5a3.6 3.6 0 1 1 2.5 2.8" stroke="#5078cc" stroke-width="2" fill="none"/><path d="M0 3l2.6 3.6L4.8 3z" fill="#5078cc"/></svg>
<div class="a" style="left:36.5px;top:120.50px;width:0;height:0;border-left:2px solid transparent;border-right:2px solid transparent;border-top:2.5px solid #1c1c1c"></div>
<svg class="a" style="left:47.5px;top:115.5px;" width="10" height="9" viewBox="0 0 10 9"><path d="M8 5.5a3.6 3.6 0 1 0-2.5 2.8" stroke="#6c6c6c" stroke-width="2" fill="none"/><path d="M10 3L7.4 6.6 5.2 3z" fill="#6c6c6c"/></svg>
<div class="a" style="left:61.5px;top:120.50px;width:0;height:0;border-left:2px solid transparent;border-right:2px solid transparent;border-top:2.5px solid #4a4a4a"></div>
<div class="a" style="left:70.5px;top:116px;width:10px;height:10px;background:linear-gradient(135deg,#dfe6f2,#fff);border:1px solid #7a8cab"></div>
<svg class="a" style="left:72px;top:117.5px;" width="7" height="7" viewBox="0 0 7 7"><path d="M0.8 3.5L2.8 5.8L6.3 0.8" stroke="#274a9a" stroke-width="1.4" fill="none"/></svg>
<div class="t" style="left:85.4px;top:115.30px;line-height:12px;font-size:8.5px;color:#efefef;">Автоматически</div>
<div class="a" style="left:151px;top:116px;width:10px;height:10px;background:linear-gradient(135deg,#c9c9c9,#f4f4f4);border:1px solid #8e8e8e"></div>
<div class="t" style="left:166px;top:115.30px;line-height:12px;font-size:8.5px;color:#efefef;">Вручную</div>
<svg class="a" style="left:208px;top:116px;" width="11" height="10" viewBox="0 0 11 10"><rect x="0.5" y="0.5" width="6" height="4" fill="#e8e8e8" stroke="#444" stroke-width=".7"/><rect x="2.5" y="3" width="6" height="4" fill="#e8e8e8" stroke="#444" stroke-width=".7"/><rect x="4.5" y="5.5" width="6" height="4" fill="#e8e8e8" stroke="#444" stroke-width=".7"/></svg>
<svg class="a" style="left:226.5px;top:116px;" width="9" height="9" viewBox="0 0 9 9"><path d="M1 8L5 4" stroke="#ddd" stroke-width="1.3"/><circle cx="6.2" cy="2.8" r="2" fill="#ddd"/></svg>
<svg class="a" style="left:242px;top:115.5px;" width="11" height="11" viewBox="0 0 11 11"><rect x="0" y="0" width="5" height="5" fill="#e8633a"/><rect x="6" y="0" width="5" height="5" fill="#f2c43a"/><rect x="0" y="6" width="5" height="5" fill="#5aa84a"/><rect x="6" y="6" width="5" height="5" fill="#d9d9d9"/></svg>
<div class="a" style="left:261px;top:117px;width:2px;height:1.3px;background:#3a3a3a;"></div>
<div class="a" style="left:264px;top:117px;width:6px;height:1.3px;background:#3a3a3a;"></div>
<div class="a" style="left:261px;top:120px;width:2px;height:1.3px;background:#3a3a3a;"></div>
<div class="a" style="left:264px;top:120px;width:6px;height:1.3px;background:#3a3a3a;"></div>
<div class="a" style="left:261px;top:123px;width:2px;height:1.3px;background:#3a3a3a;"></div>
<div class="a" style="left:264px;top:123px;width:6px;height:1.3px;background:#3a3a3a;"></div>
<svg class="a" style="left:276px;top:116px;" width="12" height="9" viewBox="0 0 12 9"><rect x="0" y="0" width="12" height="9" fill="#bcd8f0"/><path d="M0 6l4-3 3 2 5-3v7H0z" fill="#4a86c8"/></svg>
<svg class="a" style="left:292px;top:115.5px;" width="12" height="10" viewBox="0 0 12 10"><circle cx="4.3" cy="5" r="3.8" fill="#d8541e"/><path d="M5 5.5c2-3.5 4.5-3.5 6.8-1.2-1.6 3.6-4.2 4.4-6.8 1.2z" fill="#2f6fc8"/></svg>
<svg class="a" style="left:310px;top:115.5px;" width="11" height="11" viewBox="0 0 11 11"><path d="M5.5 0.5l4.5 2.3v3.2c0 2.5-2 4-4.5 4.8C3 10 1 8.500 1 6V2.800z" fill="#e89a3a" stroke="#f4d9a8" stroke-width=".8"/><circle cx="5.500" cy="5.300" r="2" fill="#d8382a"/></svg>
<svg class="a" style="left:327px;top:116.5px;" width="10" height="9" viewBox="0 0 10 9"><circle cx="2.800" cy="5.800" r="2.300" fill="none" stroke="#e8c23a" stroke-width="1.400"/><path d="M4.500 4.200L9 0.800M7.200 2.200l1.300 1.500" stroke="#e8c23a" stroke-width="1.300"/></svg>
<svg class="a" style="left:345px;top:115.5px;" width="11" height="11" viewBox="0 0 11 11"><rect x="0.500" y="0.500" width="9" height="10" fill="#e6e6e6" stroke="#8e8e8e" stroke-width=".7"/><path d="M2 3h6M2 5.200h6M2 7.400h6" stroke="#4a66a8" stroke-width=".8"/><rect x="5.500" y="5.500" width="5.500" height="5.500" fill="#3f5fae"/></svg>
<div class="a" style="left:359.5px;top:120.50px;width:0;height:0;border-left:2px solid transparent;border-right:2px solid transparent;border-top:2.5px solid #1c1c1c"></div>
<svg class="a" style="left:369.5px;top:116px;" width="10" height="10" viewBox="0 0 10 10"><circle cx="5" cy="5" r="4.200" fill="#9a9a9a" stroke="#d0d0d0" stroke-width=".9"/><circle cx="5" cy="5" r="1.600" fill="#5a5a5a"/></svg>
<svg class="a" style="left:386px;top:114.5px;" width="12" height="12" viewBox="0 0 12 12"><rect x="0.500" y="5" width="3" height="6.500" fill="#e8543a"/><rect x="4.300" y="1" width="3" height="10.500" fill="#f2b83a"/><rect x="8.100" y="3.500" width="3" height="8" fill="#e88a2a"/></svg>
<svg class="a" style="left:404px;top:115.5px;" width="12" height="11" viewBox="0 0 12 11"><rect x="0.500" y="0.500" width="11" height="10" rx="1" fill="#e8a83a" stroke="#f4e0b0" stroke-width=".8"/><rect x="2.500" y="3" width="7" height="5" fill="#5a4a3a"/><path d="M3.500 6.500l2-1.500 1.500 1 2-1.500" stroke="#fff" stroke-width=".8" fill="none"/></svg>
<div class="a" style="left:424px;top:118.8px;width:6px;height:1px;background:#d0d0d0;"></div>
<div class="a" style="left:425px;top:121.50px;width:0;height:0;border-left:2px solid transparent;border-right:2px solid transparent;border-top:2.5px solid #e0e0e0"></div>
<!-- formula bar -->
<div class="a" style="left:0px;top:131px;width:1280px;height:20px;background:#4e4e4e;"></div>
<div class="a" style="left:0.5px;top:131.5px;width:206.5px;height:16.5px;background:#fff;"></div>
<div class="t" style="left:91.5px;top:134.60px;line-height:12px;font-size:9.97px;color:#1a1a1a;transform:translateX(-50%);">R9C4</div>
<div class="a" style="left:185.5px;top:139.20px;width:0;height:0;border-left:2.8px solid transparent;border-right:2.8px solid transparent;border-top:3.3px solid #1a1a1a"></div>
<div class="a" style="left:197.500px;top:131.500px;width:66px;height:16.500px;background:#575757;border-radius:8px 0 0 8px"></div>
<div class="a" style="left:201px;top:137px;width:5px;height:5px;border-radius:50%;background:#6e6e6e"></div>
<div class="t" style="left:253px;top:134.60px;line-height:12px;font-size:11px;color:#f6f6f6;font-weight:bold;transform:translateX(-50%);font-family:'Liberation Serif',serif;font-style:italic;">f</div>
<div class="t" style="left:256.8px;top:137.00px;line-height:12px;font-size:7.5px;color:#f6f6f6;font-weight:bold;transform:translateX(-50%);font-family:'Liberation Serif',serif;font-style:italic;">x</div>
<div class="a" style="left:264px;top:131.5px;width:1003px;height:16.5px;background:#fff;"></div>
<div class="t" style="left:271px;top:133.60px;line-height:14px;font-size:10.96px;color:#1a1a1a;">Схема розташування плити перекриття Пм-5 з відм. + 12,600 по відм. +69,600 -низ</div>
<div class="a" style="left:1267.5px;top:131.5px;width:12.5px;height:16.5px;background:#666;"></div>
<svg class="a" style="left:1269.5px;top:138px;" width="8" height="6" viewBox="0 0 8 6"><path d="M1 1L4 4.500L7 1" stroke="#f0f0f0" stroke-width="1.600" fill="none"/></svg>
<!-- sheet -->
<div class="a" style="left:41.5px;top:163px;width:1224.0px;height:525px;background:#fff;"></div>
<div class="a" style="left:78.5px;top:163px;width:1px;height:525px;background:#e2e2e2;"></div>
<div class="a" style="left:107.0px;top:163px;width:1px;height:525px;background:#e2e2e2;"></div>
<div class="a" style="left:132.5px;top:163px;width:1px;height:525px;background:#e2e2e2;"></div>
<div class="a" style="left:426.5px;top:163px;width:1px;height:525px;background:#e2e2e2;"></div>
<div class="a" style="left:464.0px;top:163px;width:1px;height:525px;background:#e2e2e2;"></div>
<div class="a" style="left:509.5px;top:163px;width:1px;height:525px;background:#e2e2e2;"></div>
<div class="a" style="left:548.0px;top:163px;width:1px;height:525px;background:#e2e2e2;"></div>
<div class="a" style="left:591.0px;top:163px;width:1px;height:525px;background:#e2e2e2;"></div>
<div class="a" style="left:651.5px;top:163px;width:1px;height:525px;background:#e2e2e2;"></div>
<div class="a" style="left:696.5px;top:163px;width:1px;height:525px;background:#e2e2e2;"></div>
<div class="a" style="left:742.5px;top:163px;width:1px;height:525px;background:#e2e2e2;"></div>
<div class="a" style="left:778.5px;top:163px;width:1px;height:525px;background:#e2e2e2;"></div>
<div class="a" style="left:874.0px;top:163px;width:1px;height:525px;background:#e2e2e2;"></div>
<div class="a" style="left:927.0px;top:163px;width:1px;height:525px;background:#e2e2e2;"></div>
<div class="a" style="left:980.0px;top:163px;width:1px;height:525px;background:#e2e2e2;"></div>
<div class="a" style="left:1030.5px;top:163px;width:1px;height:525px;background:#e2e2e2;"></div>
<div class="a" style="left:1096.0px;top:163px;width:1px;height:525px;background:#e2e2e2;"></div>
<div class="a" style="left:1133.5px;top:163px;width:1px;height:525px;background:#e2e2e2;"></div>
<div class="a" style="left:1171.0px;top:163px;width:1px;height:525px;background:#e2e2e2;"></div>
<div class="a" style="left:1207.5px;top:163px;width:1px;height:525px;background:#e2e2e2;"></div>
<div class="a" style="left:1245.2px;top:163px;width:1px;height:525px;background:#e2e2e2;"></div>
<div class="a" style="left:41.5px;top:181.5px;width:1224.0px;height:1px;background:#e2e2e2;"></div>
<div class="a" style="left:41.5px;top:201.0px;width:1224.0px;height:1px;background:#e2e2e2;"></div>
<div class="a" style="left:41.5px;top:214.8px;width:1224.0px;height:1px;background:#e2e2e2;"></div>
<div class="a" style="left:41.5px;top:231.8px;width:1224.0px;height:1px;background:#e2e2e2;"></div>
<div class="a" style="left:41.5px;top:252.8px;width:1224.0px;height:1px;background:#e2e2e2;"></div>
<div class="a" style="left:41.5px;top:265.0px;width:1224.0px;height:1px;background:#e2e2e2;"></div>
<div class="a" style="left:41.5px;top:298.5px;width:1224.0px;height:1px;background:#e2e2e2;"></div>
<div class="a" style="left:41.5px;top:317.9px;width:1224.0px;height:1px;background:#e2e2e2;"></div>
<div class="a" style="left:41.5px;top:340.2px;width:1224.0px;height:1px;background:#e2e2e2;"></div>
<div class="a" style="left:41.5px;top:366.7px;width:1224.0px;height:1px;background:#e2e2e2;"></div>
<div class="a" style="left:41.5px;top:388.6px;width:1224.0px;height:1px;background:#e2e2e2;"></div>
<div class="a" style="left:41.5px;top:400.1px;width:1224.0px;height:1px;background:#e2e2e2;"></div>
<div class="a" style="left:41.5px;top:411.5px;width:1224.0px;height:1px;background:#e2e2e2;"></div>
<div class="a" style="left:41.5px;top:422.83px;width:1224.0px;height:1px;background:#e2e2e2;"></div>
<div class="a" style="left:41.5px;top:434.17px;width:1224.0px;height:1px;background:#e2e2e2;"></div>
<div class="a" style="left:41.5px;top:445.5px;width:1224.0px;height:1px;background:#e2e2e2;"></div>
<div class="a" style="left:41.5px;top:456.83px;width:1224.0px;height:1px;background:#e2e2e2;"></div>
<div class="a" style="left:41.5px;top:468.17px;width:1224.0px;height:1px;background:#e2e2e2;"></div>
<div class="a" style="left:41.5px;top:479.5px;width:1224.0px;height:1px;background:#e2e2e2;"></div>
<div class="a" style="left:41.5px;top:490.83px;width:1224.0px;height:1px;background:#e2e2e2;"></div>
<div class="a" style="left:41.5px;top:502.16px;width:1224.0px;height:1px;background:#e2e2e2;"></div>
<div class="a" style="left:41.5px;top:513.5px;width:1224.0px;height:1px;background:#e2e2e2;"></div>
<div class="a" style="left:41.5px;top:524.83px;width:1224.0px;height:1px;background:#e2e2e2;"></div>
<div class="a" style="left:41.5px;top:536.16px;width:1224.0px;height:1px;background:#e2e2e2;"></div>
<div class="a" style="left:41.5px;top:547.5px;width:1224.0px;height:1px;background:#e2e2e2;"></div>
<div class="a" style="left:41.5px;top:558.83px;width:1224.0px;height:1px;background:#e2e2e2;"></div>
<div class="a" style="left:41.5px;top:570.16px;width:1224.0px;height:1px;background:#e2e2e2;"></div>
<div class="a" style="left:41.5px;top:581.5px;width:1224.0px;height:1px;background:#e2e2e2;"></div>
<div class="a" style="left:41.5px;top:592.83px;width:1224.0px;height:1px;background:#e2e2e2;"></div>
<div class="a" style="left:41.5px;top:604.16px;width:1224.0px;height:1px;background:#e2e2e2;"></div>
<div class="a" style="left:41.5px;top:615.49px;width:1224.0px;height:1px;background:#e2e2e2;"></div>
<div class="a" style="left:41.5px;top:626.83px;width:1224.0px;height:1px;background:#e2e2e2;"></div>
<div class="a" style="left:41.5px;top:638.16px;width:1224.0px;height:1px;background:#e2e2e2;"></div>
<div class="a" style="left:41.5px;top:649.49px;width:1224.0px;height:1px;background:#e2e2e2;"></div>
<div class="a" style="left:41.5px;top:660.83px;width:1224.0px;height:1px;background:#e2e2e2;"></div>
<div class="a" style="left:41.5px;top:672.16px;width:1224.0px;height:1px;background:#e2e2e2;"></div>
<div class="a" style="left:41.5px;top:683.49px;width:1224.0px;height:1px;background:#e2e2e2;"></div>
<div class="a" style="left:0px;top:151px;width:25px;height:537px;background:#717171;"></div>
<div class="a" style="left:25px;top:151px;width:16.5px;height:537px;background:#636363;"></div>
<div class="a" style="left:0px;top:148px;width:1280px;height:3px;background:#4a4a4a;"></div>
<div class="a" style="left:41.5px;top:151px;width:1224.0px;height:12px;background:#6a6a6a;"></div>
<div class="a" style="left:79px;top:151px;width:952px;height:12px;background:linear-gradient(#f8cd52,#fbd666 45%,#fce086 85%,#fbe89c);"></div>
<div class="a" style="left:78.5px;top:151px;width:1px;height:12px;background:#555;"></div>
<div class="t" style="left:60.25px;top:151.60px;line-height:12px;font-size:8px;color:#e4e4e4;transform:translateX(-50%);">1</div>
<div class="a" style="left:107.0px;top:151px;width:1px;height:12px;background:#c9a23a;"></div>
<div class="t" style="left:93.25px;top:151.60px;line-height:12px;font-size:8px;color:#2c2000;transform:translateX(-50%);">2</div>
<div class="a" style="left:132.5px;top:151px;width:1px;height:12px;background:#c9a23a;"></div>
<div class="t" style="left:120.25px;top:151.60px;line-height:12px;font-size:8px;color:#2c2000;transform:translateX(-50%);">3</div>
<div class="a" style="left:426.5px;top:151px;width:1px;height:12px;background:#c9a23a;"></div>
<div class="t" style="left:280.0px;top:151.60px;line-height:12px;font-size:8px;color:#2c2000;transform:translateX(-50%);">4</div>
<div class="a" style="left:464.0px;top:151px;width:1px;height:12px;background:#c9a23a;"></div>
<div class="t" style="left:445.75px;top:151.60px;line-height:12px;font-size:8px;color:#2c2000;transform:translateX(-50%);">5</div>
<div class="a" style="left:509.5px;top:151px;width:1px;height:12px;background:#c9a23a;"></div>
<div class="t" style="left:487.25px;top:151.60px;line-height:12px;font-size:8px;color:#2c2000;transform:translateX(-50%);">6</div>
<div class="a" style="left:548.0px;top:151px;width:1px;height:12px;background:#c9a23a;"></div>
<div class="t" style="left:529.25px;top:151.60px;line-height:12px;font-size:8px;color:#2c2000;transform:translateX(-50%);">7</div>
<div class="a" style="left:591.0px;top:151px;width:1px;height:12px;background:#c9a23a;"></div>
<div class="t" style="left:570.0px;top:151.60px;line-height:12px;font-size:8px;color:#2c2000;transform:translateX(-50%);">8</div>
<div class="a" style="left:651.5px;top:151px;width:1px;height:12px;background:#c9a23a;"></div>
<div class="t" style="left:621.75px;top:151.60px;line-height:12px;font-size:8px;color:#2c2000;transform:translateX(-50%);">9</div>
<div class="a" style="left:696.5px;top:151px;width:1px;height:12px;background:#c9a23a;"></div>
<div class="t" style="left:674.5px;top:151.60px;line-height:12px;font-size:8px;color:#2c2000;transform:translateX(-50%);">10</div>
<div class="a" style="left:742.5px;top:151px;width:1px;height:12px;background:#c9a23a;"></div>
<div class="t" style="left:720.0px;top:151.60px;line-height:12px;font-size:8px;color:#2c2000;transform:translateX(-50%);">11</div>
<div class="a" style="left:778.5px;top:151px;width:1px;height:12px;background:#c9a23a;"></div>
<div class="t" style="left:761.0px;top:151.60px;line-height:12px;font-size:8px;color:#2c2000;transform:translateX(-50%);">12</div>
<div class="a" style="left:874.0px;top:151px;width:1px;height:12px;background:#c9a23a;"></div>
<div class="t" style="left:826.75px;top:151.60px;line-height:12px;font-size:8px;color:#2c2000;transform:translateX(-50%);">13</div>
<div class="a" style="left:927.0px;top:151px;width:1px;height:12px;background:#c9a23a;"></div>
<div class="t" style="left:901.0px;top:151.60px;line-height:12px;font-size:8px;color:#2c2000;transform:translateX(-50%);">14</div>
<div class="a" style="left:980.0px;top:151px;width:1px;height:12px;background:#c9a23a;"></div>
<div class="t" style="left:954.0px;top:151.60px;line-height:12px;font-size:8px;color:#2c2000;transform:translateX(-50%);">15</div>
<div class="a" style="left:1030.5px;top:151px;width:1px;height:12px;background:#555;"></div>
<div class="t" style="left:1005.75px;top:151.60px;line-height:12px;font-size:8px;color:#2c2000;transform:translateX(-50%);">16</div>
<div class="a" style="left:1096.0px;top:151px;width:1px;height:12px;background:#555;"></div>
<div class="t" style="left:1063.75px;top:151.60px;line-height:12px;font-size:8px;color:#e4e4e4;transform:translateX(-50%);">17</div>
<div class="a" style="left:1133.5px;top:151px;width:1px;height:12px;background:#555;"></div>
<div class="t" style="left:1115.25px;top:151.60px;line-height:12px;font-size:8px;color:#e4e4e4;transform:translateX(-50%);">18</div>
<div class="a" style="left:1171.0px;top:151px;width:1px;height:12px;background:#555;"></div>
<div class="t" style="left:1152.75px;top:151.60px;line-height:12px;font-size:8px;color:#e4e4e4;transform:translateX(-50%);">19</div>
<div class="a" style="left:1207.5px;top:151px;width:1px;height:12px;background:#555;"></div>
<div class="t" style="left:1189.75px;top:151.60px;line-height:12px;font-size:8px;color:#e4e4e4;transform:translateX(-50%);">20</div>
<div class="a" style="left:1245.2px;top:151px;width:1px;height:12px;background:#555;"></div>
<div class="t" style="left:1226.85px;top:151.60px;line-height:12px;font-size:8px;color:#e4e4e4;transform:translateX(-50%);">21</div>
<div class="a" style="left:1282.5px;top:151px;width:1px;height:12px;background:#555;"></div>
<div class="t" style="left:1261px;top:151.60px;line-height:12px;font-size:8px;color:#e4e4e4;transform:translateX(-50%);">2</div>
<div class="a" style="left:41px;top:151px;width:1px;height:12px;background:#555;"></div>
<div class="a" style="left:25px;top:151px;width:16.5px;height:12px;background:#6a6a6a;border-right:1px solid #555;border-bottom:1px solid #555"></div>
<div class="a" style="left:34px;top:155px;width:0;height:0;border-left:5px solid transparent;border-bottom:5px solid #8c8c8c"></div>
<div class="a" style="left:0.5px;top:151.5px;width:11px;height:10.5px;background:#727272;border:1px solid #3e3e3e;border-radius:1px"></div>
<div class="t" style="left:6.0px;top:151.20px;line-height:12px;font-size:8.5px;color:#141414;transform:translateX(-50%);">1</div>
<div class="a" style="left:12.5px;top:151.5px;width:11px;height:10.5px;background:#727272;border:1px solid #3e3e3e;border-radius:1px"></div>
<div class="t" style="left:18.0px;top:151.20px;line-height:12px;font-size:8.5px;color:#141414;transform:translateX(-50%);">2</div>
<div class="a" style="left:25px;top:163px;width:16.5px;height:19px;background:#636363;border-bottom:1px solid #565656;border-right:1px solid #565656"></div>
<div class="t" style="left:33px;top:171.40px;line-height:12px;font-size:8.3px;color:#f2f2f2;transform:translateX(-50%);">1</div>
<div class="a" style="left:25px;top:182px;width:16.5px;height:19.5px;background:#636363;border-bottom:1px solid #565656;border-right:1px solid #565656"></div>
<div class="t" style="left:33px;top:190.90px;line-height:12px;font-size:8.3px;color:#f2f2f2;transform:translateX(-50%);">2</div>
<div class="a" style="left:25px;top:201.5px;width:16.5px;height:13.800000000000011px;background:#636363;border-bottom:1px solid #565656;border-right:1px solid #565656"></div>
<div class="t" style="left:33px;top:204.70px;line-height:12px;font-size:8.3px;color:#f2f2f2;transform:translateX(-50%);">3</div>
<div class="a" style="left:25px;top:215.3px;width:16.5px;height:17.0px;background:#636363;border-bottom:1px solid #565656;border-right:1px solid #565656"></div>
<div class="t" style="left:33px;top:221.70px;line-height:12px;font-size:8.3px;color:#f2f2f2;transform:translateX(-50%);">4</div>
<div class="a" style="left:25px;top:232.3px;width:16.5px;height:21.0px;background:#636363;border-bottom:1px solid #565656;border-right:1px solid #565656"></div>
<div class="t" style="left:33px;top:242.70px;line-height:12px;font-size:8.3px;color:#f2f2f2;transform:translateX(-50%);">5</div>
<div class="a" style="left:25px;top:253.3px;width:16.5px;height:12.199999999999989px;background:#636363;border-bottom:1px solid #565656;border-right:1px solid #565656"></div>
<div class="t" style="left:33px;top:254.50px;line-height:12px;font-size:8.3px;color:#f2f2f2;transform:translateX(-50%);">6</div>
<div class="a" style="left:25px;top:265.5px;width:16.5px;height:33.5px;background:linear-gradient(90deg,#fbd669,#f9c74a);border-bottom:1px solid #e0a730;border-right:1px solid #caa040"></div>
<div class="t" style="left:33px;top:288.40px;line-height:12px;font-size:8.3px;color:#4a3000;transform:translateX(-50%);">9</div>
<div class="a" style="left:25px;top:299px;width:16.5px;height:19.399999999999977px;background:linear-gradient(90deg,#fbd669,#f9c74a);border-bottom:1px solid #e0a730;border-right:1px solid #caa040"></div>
<div class="t" style="left:33px;top:307.80px;line-height:12px;font-size:8.3px;color:#4a3000;transform:translateX(-50%);">13</div>
<div class="a" style="left:25px;top:318.4px;width:16.5px;height:22.30000000000001px;background:linear-gradient(90deg,#fbd669,#f9c74a);border-bottom:1px solid #e0a730;border-right:1px solid #caa040"></div>
<div class="t" style="left:33px;top:330.10px;line-height:12px;font-size:8.3px;color:#4a3000;transform:translateX(-50%);">35</div>
<div class="a" style="left:25px;top:340.7px;width:16.5px;height:26.5px;background:linear-gradient(90deg,#fbd669,#f9c74a);border-bottom:1px solid #e0a730;border-right:1px solid #caa040"></div>
<div class="t" style="left:33px;top:356.60px;line-height:12px;font-size:8.3px;color:#4a3000;transform:translateX(-50%);">38</div>
<div class="a" style="left:25px;top:367.2px;width:16.5px;height:21.900000000000034px;background:linear-gradient(90deg,#fbd669,#f9c74a);border-bottom:1px solid #e0a730;border-right:1px solid #caa040"></div>
<div class="t" style="left:33px;top:378.50px;line-height:12px;font-size:8.3px;color:#4a3000;transform:translateX(-50%);">41</div>
<div class="a" style="left:25px;top:389.1px;width:16.5px;height:11.5px;background:linear-gradient(90deg,#fbd669,#f9c74a);border-bottom:1px solid #e0a730;border-right:1px solid #caa040"></div>
<div class="t" style="left:33px;top:388.85px;line-height:12px;font-size:8.3px;color:#4a3000;transform:translateX(-50%);">80</div>
<div class="a" style="left:25px;top:400.6px;width:16.5px;height:11.399999999999977px;background:linear-gradient(90deg,#fbd669,#f9c74a);border-bottom:1px solid #e0a730;border-right:1px solid #caa040"></div>
<div class="t" style="left:33px;top:400.30px;line-height:12px;font-size:8.3px;color:#4a3000;transform:translateX(-50%);">83</div>
<div class="a" style="left:25px;top:412px;width:16.5px;height:11.329999999999984px;background:#636363;border-bottom:1px solid #565656;border-right:1px solid #565656"></div>
<div class="t" style="left:33px;top:411.66px;line-height:12px;font-size:8.3px;color:#f2f2f2;transform:translateX(-50%);">313</div>
<div class="a" style="left:25px;top:423.33px;width:16.5px;height:11.340000000000032px;background:#636363;border-bottom:1px solid #565656;border-right:1px solid #565656"></div>
<div class="t" style="left:33px;top:423.00px;line-height:12px;font-size:8.3px;color:#f2f2f2;transform:translateX(-50%);">314</div>
<div class="a" style="left:25px;top:434.67px;width:16.5px;height:11.329999999999984px;background:#636363;border-bottom:1px solid #565656;border-right:1px solid #565656"></div>
<div class="t" style="left:33px;top:434.34px;line-height:12px;font-size:8.3px;color:#f2f2f2;transform:translateX(-50%);">315</div>
<div class="a" style="left:25px;top:446.0px;width:16.5px;height:11.329999999999984px;background:#636363;border-bottom:1px solid #565656;border-right:1px solid #565656"></div>
<div class="t" style="left:33px;top:445.66px;line-height:12px;font-size:8.3px;color:#f2f2f2;transform:translateX(-50%);">316</div>
<div class="a" style="left:25px;top:457.33px;width:16.5px;height:11.340000000000032px;background:#636363;border-bottom:1px solid #565656;border-right:1px solid #565656"></div>
<div class="t" style="left:33px;top:457.00px;line-height:12px;font-size:8.3px;color:#f2f2f2;transform:translateX(-50%);">317</div>
<div class="a" style="left:25px;top:468.67px;width:16.5px;height:11.329999999999984px;background:#636363;border-bottom:1px solid #565656;border-right:1px solid #565656"></div>
<div class="t" style="left:33px;top:468.34px;line-height:12px;font-size:8.3px;color:#f2f2f2;transform:translateX(-50%);">318</div>
<div class="a" style="left:25px;top:480.0px;width:16.5px;height:11.329999999999984px;background:#636363;border-bottom:1px solid #565656;border-right:1px solid #565656"></div>
<div class="t" style="left:33px;top:479.66px;line-height:12px;font-size:8.3px;color:#f2f2f2;transform:translateX(-50%);">319</div>
<div class="a" style="left:25px;top:491.33px;width:16.5px;height:11.330000000000041px;background:#636363;border-bottom:1px solid #565656;border-right:1px solid #565656"></div>
<div class="t" style="left:33px;top:491.00px;line-height:12px;font-size:8.3px;color:#f2f2f2;transform:translateX(-50%);">320</div>
<div class="a" style="left:25px;top:502.66px;width:16.5px;height:11.339999999999975px;background:#636363;border-bottom:1px solid #565656;border-right:1px solid #565656"></div>
<div class="t" style="left:33px;top:502.33px;line-height:12px;font-size:8.3px;color:#f2f2f2;transform:translateX(-50%);">321</div>
<div class="a" style="left:25px;top:514.0px;width:16.5px;height:11.330000000000041px;background:#636363;border-bottom:1px solid #565656;border-right:1px solid #565656"></div>
<div class="t" style="left:33px;top:513.66px;line-height:12px;font-size:8.3px;color:#f2f2f2;transform:translateX(-50%);">322</div>
<div class="a" style="left:25px;top:525.33px;width:16.5px;height:11.329999999999927px;background:#636363;border-bottom:1px solid #565656;border-right:1px solid #565656"></div>
<div class="t" style="left:33px;top:525.00px;line-height:12px;font-size:8.3px;color:#f2f2f2;transform:translateX(-50%);">323</div>
<div class="a" style="left:25px;top:536.66px;width:16.5px;height:11.340000000000032px;background:#636363;border-bottom:1px solid #565656;border-right:1px solid #565656"></div>
<div class="t" style="left:33px;top:536.33px;line-height:12px;font-size:8.3px;color:#f2f2f2;transform:translateX(-50%);">324</div>
<div class="a" style="left:25px;top:548.0px;width:16.5px;height:11.330000000000041px;background:#636363;border-bottom:1px solid #565656;border-right:1px solid #565656"></div>
<div class="t" style="left:33px;top:547.66px;line-height:12px;font-size:8.3px;color:#f2f2f2;transform:translateX(-50%);">325</div>
<div class="a" style="left:25px;top:559.33px;width:16.5px;height:11.329999999999927px;background:#636363;border-bottom:1px solid #565656;border-right:1px solid #565656"></div>
<div class="t" style="left:33px;top:559.00px;line-height:12px;font-size:8.3px;color:#f2f2f2;transform:translateX(-50%);">326</div>
<div class="a" style="left:25px;top:570.66px;width:16.5px;height:11.340000000000032px;background:#636363;border-bottom:1px solid #565656;border-right:1px solid #565656"></div>
<div class="t" style="left:33px;top:570.33px;line-height:12px;font-size:8.3px;color:#f2f2f2;transform:translateX(-50%);">327</div>
<div class="a" style="left:25px;top:582.0px;width:16.5px;height:11.330000000000041px;background:#636363;border-bottom:1px solid #565656;border-right:1px solid #565656"></div>
<div class="t" style="left:33px;top:581.66px;line-height:12px;font-size:8.3px;color:#f2f2f2;transform:translateX(-50%);">328</div>
<div class="a" style="left:25px;top:593.33px;width:16.5px;height:11.329999999999927px;background:#636363;border-bottom:1px solid #565656;border-right:1px solid #565656"></div>
<div class="t" style="left:33px;top:593.00px;line-height:12px;font-size:8.3px;color:#f2f2f2;transform:translateX(-50%);">329</div>
<div class="a" style="left:25px;top:604.66px;width:16.5px;height:11.330000000000041px;background:#636363;border-bottom:1px solid #565656;border-right:1px solid #565656"></div>
<div class="t" style="left:33px;top:604.33px;line-height:12px;font-size:8.3px;color:#f2f2f2;transform:translateX(-50%);">330</div>
<div class="a" style="left:25px;top:615.99px;width:16.5px;height:11.340000000000032px;background:#636363;border-bottom:1px solid #565656;border-right:1px solid #565656"></div>
<div class="t" style="left:33px;top:615.66px;line-height:12px;font-size:8.3px;color:#f2f2f2;transform:translateX(-50%);">331</div>
<div class="a" style="left:25px;top:627.33px;width:16.5px;height:11.329999999999927px;background:#636363;border-bottom:1px solid #565656;border-right:1px solid #565656"></div>
<div class="t" style="left:33px;top:627.00px;line-height:12px;font-size:8.3px;color:#f2f2f2;transform:translateX(-50%);">332</div>
<div class="a" style="left:25px;top:638.66px;width:16.5px;height:11.330000000000041px;background:#636363;border-bottom:1px solid #565656;border-right:1px solid #565656"></div>
<div class="t" style="left:33px;top:638.33px;line-height:12px;font-size:8.3px;color:#f2f2f2;transform:translateX(-50%);">333</div>
<div class="a" style="left:25px;top:649.99px;width:16.5px;height:11.340000000000032px;background:#636363;border-bottom:1px solid #565656;border-right:1px solid #565656"></div>
<div class="t" style="left:33px;top:649.66px;line-height:12px;font-size:8.3px;color:#f2f2f2;transform:translateX(-50%);">334</div>
<div class="a" style="left:25px;top:661.33px;width:16.5px;height:11.329999999999927px;background:#636363;border-bottom:1px solid #565656;border-right:1px solid #565656"></div>
<div class="t" style="left:33px;top:661.00px;line-height:12px;font-size:8.3px;color:#f2f2f2;transform:translateX(-50%);">335</div>
<div class="a" style="left:25px;top:672.66px;width:16.5px;height:11.330000000000041px;background:#636363;border-bottom:1px solid #565656;border-right:1px solid #565656"></div>
<div class="t" style="left:33px;top:672.33px;line-height:12px;font-size:8.3px;color:#f2f2f2;transform:translateX(-50%);">336</div>
<div class="a" style="left:25px;top:683.99px;width:16.5px;height:4.009999999999991px;background:#636363;border-bottom:1px solid #565656;border-right:1px solid #565656"></div>
<div class="t" style="left:33px;top:683.65px;line-height:12px;font-size:8.3px;color:#f2f2f2;transform:translateX(-50%);">337</div>
<div class="a" style="left:16px;top:283px;width:1.6px;height:1.6px;background:#3a3a3a;border-radius:1px"></div>
<div class="a" style="left:16px;top:308.2px;width:1.6px;height:1.6px;background:#3a3a3a;border-radius:1px"></div>
<div class="a" style="left:16px;top:329.04999999999995px;width:1.6px;height:1.6px;background:#3a3a3a;border-radius:1px"></div>
<div class="a" style="left:16px;top:353.45px;width:1.6px;height:1.6px;background:#3a3a3a;border-radius:1px"></div>
<div class="a" style="left:16px;top:377.65px;width:1.6px;height:1.6px;background:#3a3a3a;border-radius:1px"></div>
<div class="a" style="left:16px;top:394.35px;width:1.6px;height:1.6px;background:#3a3a3a;border-radius:1px"></div>
<div class="a" style="left:16px;top:405.8px;width:1.6px;height:1.6px;background:#3a3a3a;border-radius:1px"></div>
<div class="a" style="left:5.5px;top:320px;width:1.3px;height:91px;background:#2a2a2a;"></div>
<div class="a" style="left:5.5px;top:320px;width:4px;height:1.2px;background:#2a2a2a;"></div>
<div class="a" style="left:5.5px;top:341.5px;width:4px;height:1.2px;background:#2a2a2a;"></div>
<div class="a" style="left:5.5px;top:367.5px;width:4px;height:1.2px;background:#2a2a2a;"></div>
<div class="a" style="left:5.5px;top:390.5px;width:4px;height:1.2px;background:#2a2a2a;"></div>
<div class="a" style="left:5.5px;top:401.5px;width:4px;height:1.2px;background:#2a2a2a;"></div>
<div class="a" style="left:426px;top:215px;width:2px;height:473px;background:#8c8c8c;"></div>
<div class="a" style="left:79px;top:214.5px;width:1017.5px;height:1.3px;background:#5a5a5a;"></div>
<div class="a" style="left:78.3px;top:214.5px;width:1.3px;height:51px;background:#5a5a5a;"></div>
<div class="a" style="left:79px;top:215.3px;width:28.5px;height:38.5px;background:#cbcbcb;border-right:1px solid #5a5a5a;border-bottom:1px solid #5a5a5a;"></div>
<div class="a" style="left:107.5px;top:215.3px;width:25.5px;height:38.5px;background:#cbcbcb;border-right:1px solid #5a5a5a;border-bottom:1px solid #5a5a5a;"></div>
<div class="a" style="left:133px;top:215.3px;width:294px;height:38.5px;background:#cbcbcb;border-right:1px solid #5a5a5a;border-bottom:1px solid #5a5a5a;"></div>
<div class="a" style="left:427px;top:215.3px;width:225px;height:17.69999999999999px;background:#cbcbcb;border-right:1px solid #5a5a5a;border-bottom:1px solid #5a5a5a;"></div>
<div class="a" style="left:427px;top:233.0px;width:37.5px;height:20.80000000000001px;background:#cbcbcb;border-right:1px solid #5a5a5a;border-bottom:1px solid #5a5a5a;"></div>
<div class="a" style="left:464.5px;top:233.0px;width:45.5px;height:20.80000000000001px;background:#cbcbcb;border-right:1px solid #5a5a5a;border-bottom:1px solid #5a5a5a;"></div>
<div class="a" style="left:510px;top:233.0px;width:38.5px;height:20.80000000000001px;background:#cbcbcb;border-right:1px solid #5a5a5a;border-bottom:1px solid #5a5a5a;"></div>
<div class="a" style="left:548.5px;top:233.0px;width:43.0px;height:20.80000000000001px;background:#cbcbcb;border-right:1px solid #5a5a5a;border-bottom:1px solid #5a5a5a;"></div>
<div class="a" style="left:591.5px;top:233.0px;width:60.5px;height:20.80000000000001px;background:#cbcbcb;border-right:1px solid #5a5a5a;border-bottom:1px solid #5a5a5a;"></div>
<div class="a" style="left:652px;top:215.3px;width:222.5px;height:17.69999999999999px;background:#fdefc6;border-right:1px solid #5a5a5a;border-bottom:1px solid #5a5a5a;"></div>
<div class="a" style="left:652px;top:233.0px;width:45px;height:20.80000000000001px;background:#fdefc6;border-right:1px solid #5a5a5a;border-bottom:1px solid #5a5a5a;"></div>
<div class="a" style="left:697px;top:233.0px;width:46px;height:20.80000000000001px;background:#fdefc6;border-right:1px solid #5a5a5a;border-bottom:1px solid #5a5a5a;"></div>
<div class="a" style="left:743px;top:233.0px;width:36px;height:20.80000000000001px;background:#fdefc6;border-right:1px solid #5a5a5a;border-bottom:1px solid #5a5a5a;"></div>
<div class="a" style="left:779px;top:233.0px;width:95.5px;height:20.80000000000001px;background:#fdefc6;border-right:1px solid #5a5a5a;border-bottom:1px solid #5a5a5a;"></div>
<div class="a" style="left:874.5px;top:215.3px;width:156.5px;height:17.69999999999999px;background:#deebd3;border-right:1px solid #5a5a5a;border-bottom:1px solid #5a5a5a;"></div>
<div class="a" style="left:874.5px;top:233.0px;width:53.0px;height:20.80000000000001px;background:#deebd3;border-right:1px solid #5a5a5a;border-bottom:1px solid #5a5a5a;"></div>
<div class="a" style="left:927.5px;top:233.0px;width:53.0px;height:20.80000000000001px;background:#deebd3;border-right:1px solid #5a5a5a;border-bottom:1px solid #5a5a5a;"></div>
<div class="a" style="left:980.5px;top:233.0px;width:50.5px;height:20.80000000000001px;background:#deebd3;border-right:1px solid #5a5a5a;border-bottom:1px solid #5a5a5a;"></div>
<div class="a" style="left:1031px;top:215.3px;width:65.5px;height:38.5px;background:#cbcbcb;border-right:1px solid #5a5a5a;border-bottom:1px solid #5a5a5a;"></div>
<div class="a" style="left:79px;top:253.8px;width:28.5px;height:11.699999999999989px;background:#fff;border-right:1px solid #5a5a5a;border-bottom:1px solid #5a5a5a;border-bottom:none;"></div>
<div class="a" style="left:107.5px;top:253.8px;width:25.5px;height:11.699999999999989px;background:#fff;border-right:1px solid #5a5a5a;border-bottom:1px solid #5a5a5a;border-bottom:none;"></div>
<div class="a" style="left:133px;top:253.8px;width:294px;height:11.699999999999989px;background:#fff;border-right:1px solid #5a5a5a;border-bottom:1px solid #5a5a5a;border-bottom:none;"></div>
<div class="a" style="left:427px;top:253.8px;width:37.5px;height:11.699999999999989px;background:#fff;border-right:1px solid #5a5a5a;border-bottom:1px solid #5a5a5a;border-bottom:none;"></div>
<div class="a" style="left:464.5px;top:253.8px;width:45.5px;height:11.699999999999989px;background:#fff;border-right:1px solid #5a5a5a;border-bottom:1px solid #5a5a5a;border-bottom:none;"></div>
<div class="a" style="left:510px;top:253.8px;width:38.5px;height:11.699999999999989px;background:#fff;border-right:1px solid #5a5a5a;border-bottom:1px solid #5a5a5a;border-bottom:none;"></div>
<div class="a" style="left:548.5px;top:253.8px;width:43.0px;height:11.699999999999989px;background:#fff;border-right:1px solid #5a5a5a;border-bottom:1px solid #5a5a5a;border-bottom:none;"></div>
<div class="a" style="left:591.5px;top:253.8px;width:60.5px;height:11.699999999999989px;background:#fff;border-right:1px solid #5a5a5a;border-bottom:1px solid #5a5a5a;border-bottom:none;"></div>
<div class="a" style="left:652px;top:253.8px;width:45px;height:11.699999999999989px;background:#fff;border-right:1px solid #5a5a5a;border-bottom:1px solid #5a5a5a;border-bottom:none;"></div>
<div class="a" style="left:697px;top:253.8px;width:46px;height:11.699999999999989px;background:#fff;border-right:1px solid #5a5a5a;border-bottom:1px solid #5a5a5a;border-bottom:none;"></div>
<div class="a" style="left:743px;top:253.8px;width:36px;height:11.699999999999989px;background:#fff;border-right:1px solid #5a5a5a;border-bottom:1px solid #5a5a5a;border-bottom:none;"></div>
<div class="a" style="left:779px;top:253.8px;width:95.5px;height:11.699999999999989px;background:#fff;border-right:1px solid #5a5a5a;border-bottom:1px solid #5a5a5a;border-bottom:none;"></div>
<div class="a" style="left:874.5px;top:253.8px;width:53.0px;height:11.699999999999989px;background:#fff;border-right:1px solid #5a5a5a;border-bottom:1px solid #5a5a5a;border-bottom:none;"></div>
<div class="a" style="left:927.5px;top:253.8px;width:53.0px;height:11.699999999999989px;background:#fff;border-right:1px solid #5a5a5a;border-bottom:1px solid #5a5a5a;border-bottom:none;"></div>
<div class="a" style="left:980.5px;top:253.8px;width:50.5px;height:11.699999999999989px;background:#fff;border-right:1px solid #5a5a5a;border-bottom:1px solid #5a5a5a;border-bottom:none;"></div>
<div class="a" style="left:1031px;top:253.8px;width:65.5px;height:11.699999999999989px;background:#fff;border-right:1px solid #5a5a5a;border-bottom:1px solid #5a5a5a;border-bottom:none;"></div>
<div class="a" style="left:79px;top:252.70000000000002px;width:1017.5px;height:1.3px;background:#454545;"></div>
<div class="a" style="left:78.3px;top:214.6px;width:1018.2px;height:1.2px;background:#5e5e5e;"></div>
<div class="a" style="left:95.0px;top:254.8px;width:11.5px;height:10.5px;background:linear-gradient(#ffffff,#e2e2e2);border:1px solid #d2d2d2"></div>
<div class="a" style="left:98.2px;top:258.90px;width:0;height:0;border-left:2.6px solid transparent;border-right:2.6px solid transparent;border-top:3.1px solid #444"></div>
<div class="a" style="left:120.5px;top:254.8px;width:11.5px;height:10.5px;background:linear-gradient(#ffffff,#e2e2e2);border:1px solid #d2d2d2"></div>
<div class="a" style="left:123.7px;top:258.90px;width:0;height:0;border-left:2.6px solid transparent;border-right:2.6px solid transparent;border-top:3.1px solid #444"></div>
<div class="a" style="left:414.5px;top:254.8px;width:11.5px;height:10.5px;background:linear-gradient(#ffffff,#e2e2e2);border:1px solid #d2d2d2"></div>
<div class="a" style="left:417.7px;top:258.90px;width:0;height:0;border-left:2.6px solid transparent;border-right:2.6px solid transparent;border-top:3.1px solid #444"></div>
<div class="a" style="left:452.0px;top:254.8px;width:11.5px;height:10.5px;background:linear-gradient(#ffffff,#e2e2e2);border:1px solid #d2d2d2"></div>
<svg class="a" style="left:453.5px;top:256.8px;" width="9" height="7" viewBox="0 0 9 7"><path d="M0 4.5h2.2l-1.1 1.6z" fill="#333"/><path d="M3 0.5h5.6l-2.1 2.6v3.2l-1.4-0.9v-2.3z" fill="#333"/></svg>
<div class="a" style="left:497.5px;top:254.8px;width:11.5px;height:10.5px;background:linear-gradient(#ffffff,#e2e2e2);border:1px solid #d2d2d2"></div>
<div class="a" style="left:500.7px;top:258.90px;width:0;height:0;border-left:2.6px solid transparent;border-right:2.6px solid transparent;border-top:3.1px solid #444"></div>
<div class="a" style="left:536.0px;top:254.8px;width:11.5px;height:10.5px;background:linear-gradient(#ffffff,#e2e2e2);border:1px solid #d2d2d2"></div>
<div class="a" style="left:539.1999999999999px;top:258.90px;width:0;height:0;border-left:2.6px solid transparent;border-right:2.6px solid transparent;border-top:3.1px solid #444"></div>
<div class="a" style="left:579.0px;top:254.8px;width:11.5px;height:10.5px;background:linear-gradient(#ffffff,#e2e2e2);border:1px solid #d2d2d2"></div>
<div class="a" style="left:582.1999999999999px;top:258.90px;width:0;height:0;border-left:2.6px solid transparent;border-right:2.6px solid transparent;border-top:3.1px solid #444"></div>
<div class="a" style="left:639.5px;top:254.8px;width:11.5px;height:10.5px;background:linear-gradient(#ffffff,#e2e2e2);border:1px solid #d2d2d2"></div>
<div class="a" style="left:642.6999999999999px;top:258.90px;width:0;height:0;border-left:2.6px solid transparent;border-right:2.6px solid transparent;border-top:3.1px solid #444"></div>
<div class="a" style="left:684.5px;top:254.8px;width:11.5px;height:10.5px;background:linear-gradient(#ffffff,#e2e2e2);border:1px solid #d2d2d2"></div>
<div class="a" style="left:687.6999999999999px;top:258.90px;width:0;height:0;border-left:2.6px solid transparent;border-right:2.6px solid transparent;border-top:3.1px solid #444"></div>
<div class="a" style="left:730.5px;top:254.8px;width:11.5px;height:10.5px;background:linear-gradient(#ffffff,#e2e2e2);border:1px solid #d2d2d2"></div>
<div class="a" style="left:733.6999999999999px;top:258.90px;width:0;height:0;border-left:2.6px solid transparent;border-right:2.6px solid transparent;border-top:3.1px solid #444"></div>
<div class="a" style="left:766.5px;top:254.8px;width:11.5px;height:10.5px;background:linear-gradient(#ffffff,#e2e2e2);border:1px solid #d2d2d2"></div>
<div class="a" style="left:769.6999999999999px;top:258.90px;width:0;height:0;border-left:2.6px solid transparent;border-right:2.6px solid transparent;border-top:3.1px solid #444"></div>
<div class="a" style="left:862.0px;top:254.8px;width:11.5px;height:10.5px;background:linear-gradient(#ffffff,#e2e2e2);border:1px solid #d2d2d2"></div>
<div class="a" style="left:865.1999999999999px;top:258.90px;width:0;height:0;border-left:2.6px solid transparent;border-right:2.6px solid transparent;border-top:3.1px solid #444"></div>
<div class="a" style="left:915.0px;top:254.8px;width:11.5px;height:10.5px;background:linear-gradient(#ffffff,#e2e2e2);border:1px solid #d2d2d2"></div>
<div class="a" style="left:918.1999999999999px;top:258.90px;width:0;height:0;border-left:2.6px solid transparent;border-right:2.6px solid transparent;border-top:3.1px solid #444"></div>
<div class="a" style="left:968.0px;top:254.8px;width:11.5px;height:10.5px;background:linear-gradient(#ffffff,#e2e2e2);border:1px solid #d2d2d2"></div>
<div class="a" style="left:971.1999999999999px;top:258.90px;width:0;height:0;border-left:2.6px solid transparent;border-right:2.6px solid transparent;border-top:3.1px solid #444"></div>
<div class="a" style="left:1018.5px;top:254.8px;width:11.5px;height:10.5px;background:linear-gradient(#ffffff,#e2e2e2);border:1px solid #d2d2d2"></div>
<div class="a" style="left:1021.6999999999999px;top:258.90px;width:0;height:0;border-left:2.6px solid transparent;border-right:2.6px solid transparent;border-top:3.1px solid #444"></div>
<div class="a" style="left:1084.0px;top:254.8px;width:11.5px;height:10.5px;background:linear-gradient(#ffffff,#e2e2e2);border:1px solid #d2d2d2"></div>
<div class="a" style="left:1087.2px;top:258.90px;width:0;height:0;border-left:2.6px solid transparent;border-right:2.6px solid transparent;border-top:3.1px solid #444"></div>
<div class="a" style="left:425.8px;top:214.5px;width:2.4px;height:52px;background:#1e1e1e;"></div>
<div class="t" style="left:93.25px;top:223.50px;line-height:12px;font-size:7.9px;color:#1c1c1c;font-weight:bold;transform:translateX(-50%);">Аркуш</div>
<div class="t" style="left:93.25px;top:234.50px;line-height:12px;font-size:7.9px;color:#1c1c1c;font-weight:bold;transform:translateX(-50%);">№</div>
<div class="t" style="left:120.25px;top:229.00px;line-height:12px;font-size:7.85px;color:#1c1c1c;font-weight:bold;transform:translateX(-50%);">Зміна</div>
<div class="t" style="left:280.0px;top:229.00px;line-height:12px;font-size:7.3px;color:#1c1c1c;font-weight:bold;transform:translateX(-50%);">Назва</div>
<div class="t" style="left:539.5px;top:219.00px;line-height:12px;font-size:8.08px;color:#1c1c1c;transform:translateX(-50%);">Отримано</div>
<div class="t" style="left:446.05px;top:238.20px;line-height:12px;font-size:7.54px;color:#1c1c1c;font-weight:bold;transform:translateX(-50%);">Накладна</div>
<div class="t" style="left:487.25px;top:238.20px;line-height:12px;font-size:7.56px;color:#1c1c1c;font-weight:bold;transform:translateX(-50%);">Дата</div>
<div class="t" style="left:529.25px;top:238.20px;line-height:12px;font-size:7.21px;color:#1c1c1c;font-weight:bold;transform:translateX(-50%);">Кількість</div>
<div class="t" style="left:570.0px;top:238.20px;line-height:12px;font-size:7.31px;color:#1c1c1c;font-weight:bold;transform:translateX(-50%);">Ел. вигляд</div>
<div class="t" style="left:621.75px;top:238.20px;line-height:12px;font-size:7.66px;color:#1c1c1c;font-weight:bold;transform:translateX(-50%);">Примітки</div>
<div class="t" style="left:763.25px;top:219.00px;line-height:12px;font-size:7.91px;color:#1c1c1c;transform:translateX(-50%);">Передано на СК</div>
<div class="t" style="left:674.5px;top:233.00px;line-height:12px;font-size:7.54px;color:#1c1c1c;font-weight:bold;transform:translateX(-50%);">Накладна</div>
<div class="t" style="left:674.5px;top:243.80px;line-height:12px;font-size:7.76px;color:#1c1c1c;font-weight:bold;transform:translateX(-50%);">на СК</div>
<div class="t" style="left:720.0px;top:238.20px;line-height:12px;font-size:7.56px;color:#1c1c1c;font-weight:bold;transform:translateX(-50%);">Дата</div>
<div class="t" style="left:761.0px;top:238.20px;line-height:12px;font-size:7.21px;color:#1c1c1c;font-weight:bold;transform:translateX(-50%);">Кількість</div>
<div class="t" style="left:826.75px;top:238.20px;line-height:12px;font-size:7.66px;color:#1c1c1c;font-weight:bold;transform:translateX(-50%);">Примітки</div>
<div class="t" style="left:952.75px;top:219.00px;line-height:12px;font-size:8.06px;color:#1c1c1c;transform:translateX(-50%);">Передано на Ділянку</div>
<div class="t" style="left:901.0px;top:233.00px;line-height:12px;font-size:7.54px;color:#1c1c1c;font-weight:bold;transform:translateX(-50%);">Накладна</div>
<div class="t" style="left:901.0px;top:243.80px;line-height:12px;font-size:7.27px;color:#1c1c1c;font-weight:bold;transform:translateX(-50%);">Внутрішня</div>
<div class="t" style="left:954.0px;top:238.20px;line-height:12px;font-size:7.56px;color:#1c1c1c;font-weight:bold;transform:translateX(-50%);">Дата</div>
<div class="t" style="left:1005.75px;top:238.20px;line-height:12px;font-size:7.21px;color:#1c1c1c;font-weight:bold;transform:translateX(-50%);">Кількість</div>
<div class="t" style="left:1063.75px;top:229.00px;line-height:12px;font-size:7.65px;color:#1c1c1c;font-weight:bold;transform:translateX(-50%);">Коробка</div>
<div class="a" style="left:79px;top:265.5px;width:952px;height:146.5px;background:#a8a8a8;"></div>
<div class="a" style="left:1031px;top:265.5px;width:65.5px;height:146.5px;background:#fdefc6;"></div>
<div class="a" style="left:133px;top:265.5px;width:294px;height:33.5px;background:#fdefc6;"></div>
<div class="a" style="left:107.0px;top:265.5px;width:1px;height:146.5px;background:#3e3e3e;"></div>
<div class="a" style="left:132.5px;top:265.5px;width:1px;height:146.5px;background:#3e3e3e;"></div>
<div class="a" style="left:426.5px;top:265.5px;width:1px;height:146.5px;background:#3e3e3e;"></div>
<div class="a" style="left:464.0px;top:265.5px;width:1px;height:146.5px;background:#3e3e3e;"></div>
<div class="a" style="left:509.5px;top:265.5px;width:1px;height:146.5px;background:#3e3e3e;"></div>
<div class="a" style="left:548.0px;top:265.5px;width:1px;height:146.5px;background:#3e3e3e;"></div>
<div class="a" style="left:591.0px;top:265.5px;width:1px;height:146.5px;background:#3e3e3e;"></div>
<div class="a" style="left:651.5px;top:265.5px;width:1px;height:146.5px;background:#3e3e3e;"></div>
<div class="a" style="left:696.5px;top:265.5px;width:1px;height:146.5px;background:#3e3e3e;"></div>
<div class="a" style="left:742.5px;top:265.5px;width:1px;height:146.5px;background:#3e3e3e;"></div>
<div class="a" style="left:778.5px;top:265.5px;width:1px;height:146.5px;background:#3e3e3e;"></div>
<div class="a" style="left:874.0px;top:265.5px;width:1px;height:146.5px;background:#3e3e3e;"></div>
<div class="a" style="left:927.0px;top:265.5px;width:1px;height:146.5px;background:#3e3e3e;"></div>
<div class="a" style="left:980.0px;top:265.5px;width:1px;height:146.5px;background:#3e3e3e;"></div>
<div class="a" style="left:79px;top:298.3px;width:950px;height:1.3px;background:#858585;"></div>
<div class="a" style="left:1031px;top:298.3px;width:65.5px;height:1.3px;background:#a59a78;"></div>
<div class="a" style="left:427px;top:317.7px;width:602px;height:1.3px;background:#565656;"></div>
<div class="a" style="left:1031px;top:317.7px;width:65.5px;height:1.3px;background:#4a463c;"></div>
<div class="a" style="left:79px;top:340.0px;width:950px;height:1.3px;background:#7a7a7a;"></div>
<div class="a" style="left:1031px;top:340.0px;width:65.5px;height:1.3px;background:#a59a78;"></div>
<div class="a" style="left:79px;top:366.5px;width:950px;height:1.3px;background:#747474;"></div>
<div class="a" style="left:1031px;top:366.5px;width:65.5px;height:1.3px;background:#a59a78;"></div>
<div class="a" style="left:79px;top:388.40000000000003px;width:950px;height:1.3px;background:#707070;"></div>
<div class="a" style="left:1031px;top:388.40000000000003px;width:65.5px;height:1.3px;background:#a59a78;"></div>
<div class="a" style="left:79px;top:399.90000000000003px;width:950px;height:1.3px;background:#4a4a4a;"></div>
<div class="a" style="left:1031px;top:399.90000000000003px;width:65.5px;height:1.3px;background:#4a463c;"></div>
<div class="a" style="left:79px;top:411.3px;width:950px;height:1.3px;background:#4a4a4a;"></div>
<div class="a" style="left:1031px;top:411.3px;width:65.5px;height:1.3px;background:#4a463c;"></div>
<div class="a" style="left:78.1px;top:265.5px;width:1.6px;height:146.5px;background:#787878;"></div>
<div class="a" style="left:1028.7px;top:265.5px;width:2.6px;height:147.1px;background:#dcd6c2;"></div>
<div class="a" style="left:1096.0px;top:265.5px;width:1.4px;height:146.5px;background:#9a958a;"></div>
<div class="a" style="left:425.8px;top:265.5px;width:2.2px;height:146.5px;background:#1e1e1e;"></div>
<div class="a" style="left:0px;top:265px;width:1265.5px;height:1px;background:#3a3a3a;"></div>
<div class="a" style="left:78px;top:264.8px;width:1019.0px;height:1.8px;background:#161616;"></div>
<div class="t" style="left:93.25px;top:277.15px;line-height:12px;font-size:8px;color:#141414;transform:translateX(-50%);">3</div>
<div class="t" style="left:445.75px;top:277.15px;line-height:12px;font-size:8px;color:#1d2fd0;transform:translateX(-50%);text-decoration:underline;">№38</div>
<div class="t" style="left:487.25px;top:277.15px;line-height:12px;font-size:8px;color:#141414;transform:translateX(-50%);">02.08.2018</div>
<div class="t" style="left:529.25px;top:277.15px;line-height:12px;font-size:8px;color:#141414;transform:translateX(-50%);">4</div>
<div class="t" style="left:674.5px;top:277.15px;line-height:12px;font-size:8px;color:#2a35e0;transform:translateX(-50%);">№14</div>
<div class="t" style="left:720.0px;top:277.15px;line-height:12px;font-size:8px;color:#141414;transform:translateX(-50%);">03.09.2018</div>
<div class="t" style="left:761.0px;top:277.15px;line-height:12px;font-size:8px;color:#141414;transform:translateX(-50%);">1</div>
<div class="t" style="left:781px;top:277.15px;line-height:12px;font-size:8px;color:#141414;">Для ознайомлення</div>
<div class="t" style="left:93.25px;top:302.80px;line-height:12px;font-size:8px;color:#141414;transform:translateX(-50%);">4</div>
<div class="t" style="left:135px;top:302.80px;line-height:12px;font-size:8px;color:#141414;">Фрагмент 1...2</div>
<div class="t" style="left:445.75px;top:302.80px;line-height:12px;font-size:8px;color:#1d2fd0;transform:translateX(-50%);text-decoration:underline;">№38</div>
<div class="t" style="left:487.25px;top:302.80px;line-height:12px;font-size:8px;color:#141414;transform:translateX(-50%);">02.08.2018</div>
<div class="t" style="left:529.25px;top:302.80px;line-height:12px;font-size:8px;color:#141414;transform:translateX(-50%);">4</div>
<div class="t" style="left:674.5px;top:302.80px;line-height:12px;font-size:8px;color:#2a35e0;transform:translateX(-50%);">№14</div>
<div class="t" style="left:720.0px;top:302.80px;line-height:12px;font-size:8px;color:#141414;transform:translateX(-50%);">03.09.2018</div>
<div class="t" style="left:761.0px;top:302.80px;line-height:12px;font-size:8px;color:#141414;transform:translateX(-50%);">1</div>
<div class="t" style="left:781px;top:302.80px;line-height:12px;font-size:8px;color:#141414;">Для ознайомлення</div>
<div class="t" style="left:93.25px;top:324.45px;line-height:12px;font-size:8px;color:#141414;transform:translateX(-50%);">14</div>
<div class="t" style="left:135px;top:324.45px;line-height:12px;font-size:8px;color:#141414;">Схема розташування вертикальних елементів на відм. +12,800...+15,800</div>
<div class="t" style="left:445.75px;top:324.45px;line-height:12px;font-size:8px;color:#1d2fd0;transform:translateX(-50%);text-decoration:underline;">№38</div>
<div class="t" style="left:487.25px;top:324.45px;line-height:12px;font-size:8px;color:#141414;transform:translateX(-50%);">02.08.2018</div>
<div class="t" style="left:529.25px;top:324.45px;line-height:12px;font-size:8px;color:#141414;transform:translateX(-50%);">4</div>
<div class="t" style="left:570.0px;top:324.45px;line-height:12px;font-size:8px;color:#141414;transform:translateX(-50%);">Dwg, Pdf</div>
<div class="t" style="left:674.5px;top:324.45px;line-height:12px;font-size:8px;color:#2a35e0;transform:translateX(-50%);">№14</div>
<div class="t" style="left:720.0px;top:324.45px;line-height:12px;font-size:8px;color:#141414;transform:translateX(-50%);">03.09.2018</div>
<div class="t" style="left:761.0px;top:324.45px;line-height:12px;font-size:8px;color:#141414;transform:translateX(-50%);">2</div>
<div class="t" style="left:901.0px;top:324.45px;line-height:12px;font-size:8px;color:#2a35e0;transform:translateX(-50%);">№25</div>
<div class="t" style="left:954.0px;top:324.45px;line-height:12px;font-size:8px;color:#141414;transform:translateX(-50%);">11.02.2019</div>
<div class="t" style="left:1005.75px;top:324.45px;line-height:12px;font-size:8px;color:#141414;transform:translateX(-50%);">1</div>
<div class="t" style="left:93.25px;top:348.85px;line-height:12px;font-size:8px;color:#141414;transform:translateX(-50%);">15</div>
<div class="t" style="left:135px;top:348.85px;line-height:12px;font-size:8px;color:#141414;">Схема розташування вертикальних елементів на відм. +18,800...+33,800</div>
<div class="t" style="left:445.75px;top:348.85px;line-height:12px;font-size:8px;color:#1d2fd0;transform:translateX(-50%);text-decoration:underline;">№38</div>
<div class="t" style="left:487.25px;top:348.85px;line-height:12px;font-size:8px;color:#141414;transform:translateX(-50%);">02.08.2018</div>
<div class="t" style="left:529.25px;top:348.85px;line-height:12px;font-size:8px;color:#141414;transform:translateX(-50%);">4</div>
<div class="t" style="left:570.0px;top:348.85px;line-height:12px;font-size:8px;color:#141414;transform:translateX(-50%);">Dwg, Pdf</div>
<div class="t" style="left:674.5px;top:348.85px;line-height:12px;font-size:8px;color:#2a35e0;transform:translateX(-50%);">№14</div>
<div class="t" style="left:720.0px;top:348.85px;line-height:12px;font-size:8px;color:#141414;transform:translateX(-50%);">03.09.2018</div>
<div class="t" style="left:761.0px;top:348.85px;line-height:12px;font-size:8px;color:#141414;transform:translateX(-50%);">2</div>
<div class="t" style="left:901.0px;top:348.85px;line-height:12px;font-size:8px;color:#2a35e0;transform:translateX(-50%);">№25</div>
<div class="t" style="left:954.0px;top:348.85px;line-height:12px;font-size:8px;color:#141414;transform:translateX(-50%);">11.02.2019</div>
<div class="t" style="left:1005.75px;top:348.85px;line-height:12px;font-size:8px;color:#141414;transform:translateX(-50%);">1</div>
<div class="t" style="left:93.25px;top:373.05px;line-height:12px;font-size:8px;color:#141414;transform:translateX(-50%);">16</div>
<div class="t" style="left:135px;top:373.05px;line-height:12px;font-size:8px;color:#141414;">Схема розташування вертикальних елементів на відм. +36,800...+69,800</div>
<div class="t" style="left:445.75px;top:373.05px;line-height:12px;font-size:8px;color:#1d2fd0;transform:translateX(-50%);text-decoration:underline;">№38</div>
<div class="t" style="left:487.25px;top:373.05px;line-height:12px;font-size:8px;color:#141414;transform:translateX(-50%);">02.08.2018</div>
<div class="t" style="left:529.25px;top:373.05px;line-height:12px;font-size:8px;color:#141414;transform:translateX(-50%);">4</div>
<div class="t" style="left:570.0px;top:373.05px;line-height:12px;font-size:8px;color:#141414;transform:translateX(-50%);">Dwg, Pdf</div>
<div class="t" style="left:674.5px;top:373.05px;line-height:12px;font-size:8px;color:#2a35e0;transform:translateX(-50%);">№14</div>
<div class="t" style="left:720.0px;top:373.05px;line-height:12px;font-size:8px;color:#141414;transform:translateX(-50%);">03.09.2018</div>
<div class="t" style="left:761.0px;top:373.05px;line-height:12px;font-size:8px;color:#141414;transform:translateX(-50%);">2</div>
<div class="t" style="left:901.0px;top:373.05px;line-height:12px;font-size:8px;color:#2a35e0;transform:translateX(-50%);">№25</div>
<div class="t" style="left:954.0px;top:373.05px;line-height:12px;font-size:8px;color:#141414;transform:translateX(-50%);">11.02.2019</div>
<div class="t" style="left:1005.75px;top:373.05px;line-height:12px;font-size:8px;color:#141414;transform:translateX(-50%);">1</div>
<div class="t" style="left:93.25px;top:389.20px;line-height:12px;font-size:8px;color:#141414;transform:translateX(-50%);">35</div>
<div class="t" style="left:135px;top:389.20px;line-height:12px;font-size:8px;color:#141414;">Фрагмент №1</div>
<div class="t" style="left:445.75px;top:389.20px;line-height:12px;font-size:8px;color:#1d2fd0;transform:translateX(-50%);text-decoration:underline;">№38</div>
<div class="t" style="left:487.25px;top:389.20px;line-height:12px;font-size:8px;color:#141414;transform:translateX(-50%);">02.08.2018</div>
<div class="t" style="left:529.25px;top:389.20px;line-height:12px;font-size:8px;color:#141414;transform:translateX(-50%);">4</div>
<div class="t" style="left:570.0px;top:389.20px;line-height:12px;font-size:8px;color:#141414;transform:translateX(-50%);">Dwg, Pdf</div>
<div class="t" style="left:674.5px;top:389.20px;line-height:12px;font-size:8px;color:#2a35e0;transform:translateX(-50%);">№14</div>
<div class="t" style="left:720.0px;top:389.20px;line-height:12px;font-size:8px;color:#141414;transform:translateX(-50%);">03.09.2018</div>
<div class="t" style="left:761.0px;top:389.20px;line-height:12px;font-size:8px;color:#141414;transform:translateX(-50%);">2</div>
<div class="t" style="left:901.0px;top:389.20px;line-height:12px;font-size:8px;color:#2a35e0;transform:translateX(-50%);">№25</div>
<div class="t" style="left:954.0px;top:389.20px;line-height:12px;font-size:8px;color:#141414;transform:translateX(-50%);">11.02.2019</div>
<div class="t" style="left:1005.75px;top:389.20px;line-height:12px;font-size:8px;color:#141414;transform:translateX(-50%);">1</div>
<div class="t" style="left:93.25px;top:400.60px;line-height:12px;font-size:8px;color:#141414;transform:translateX(-50%);">36</div>
<div class="t" style="left:135px;top:400.60px;line-height:12px;font-size:8px;color:#141414;">Розрізи 1-1...11-11 (опалубка)</div>
<div class="t" style="left:445.75px;top:400.60px;line-height:12px;font-size:8px;color:#1d2fd0;transform:translateX(-50%);text-decoration:underline;">№38</div>
<div class="t" style="left:487.25px;top:400.60px;line-height:12px;font-size:8px;color:#141414;transform:translateX(-50%);">02.08.2018</div>
<div class="t" style="left:529.25px;top:400.60px;line-height:12px;font-size:8px;color:#141414;transform:translateX(-50%);">4</div>
<div class="t" style="left:570.0px;top:400.60px;line-height:12px;font-size:8px;color:#141414;transform:translateX(-50%);">Dwg, Pdf</div>
<div class="t" style="left:674.5px;top:400.60px;line-height:12px;font-size:8px;color:#2a35e0;transform:translateX(-50%);">№14</div>
<div class="t" style="left:720.0px;top:400.60px;line-height:12px;font-size:8px;color:#141414;transform:translateX(-50%);">03.09.2018</div>
<div class="t" style="left:761.0px;top:400.60px;line-height:12px;font-size:8px;color:#141414;transform:translateX(-50%);">2</div>
<div class="t" style="left:901.0px;top:400.60px;line-height:12px;font-size:8px;color:#2a35e0;transform:translateX(-50%);">№25</div>
<div class="t" style="left:954.0px;top:400.60px;line-height:12px;font-size:8px;color:#141414;transform:translateX(-50%);">11.02.2019</div>
<div class="t" style="left:1005.75px;top:400.60px;line-height:12px;font-size:8px;color:#141414;transform:translateX(-50%);">1</div>
<div class="t" style="left:280.0px;top:270.50px;line-height:12px;font-size:8px;color:#141414;transform:translateX(-50%);">Схема розташування плити перекриття Пм-5 з відм. + 12,600 по відм.</div>
<div class="t" style="left:280.0px;top:281.80px;line-height:12px;font-size:8px;color:#141414;transform:translateX(-50%);">+69,600 -низ</div>
<div class="t" style="left:621.75px;top:266.50px;line-height:12px;font-size:8px;color:#e8202a;transform:translateX(-50%);">А3 Помилка у</div>
<div class="t" style="left:621.75px;top:278.20px;line-height:12px;font-size:8px;color:#e8202a;transform:translateX(-50%);">відмітках у</div>
<div class="t" style="left:621.75px;top:289.60px;line-height:12px;font-size:8px;color:#e8202a;transform:translateX(-50%);">штампі  +</div>
<div class="t" style="left:621.75px;top:302.80px;line-height:12px;font-size:8px;color:#141414;transform:translateX(-50%);">А3</div>
<div class="a" style="left:266px;top:169px;width:78px;height:39px;border-radius:6px;background:linear-gradient(#adadad,#9a9a9a 50%,#8c8c8c);box-shadow:0 1.5px 3px rgba(0,0,0,.45);border:1px solid #9c9c9c"></div>
<div class="t" style="left:305px;top:176.50px;line-height:12px;font-size:9.04px;color:#fff;font-weight:bold;transform:translateX(-50%);">фильтр в</div>
<div class="t" style="left:305px;top:188.50px;line-height:12px;font-size:8.85px;color:#fff;font-weight:bold;transform:translateX(-50%);">лист Новый</div>
<div class="a" style="left:361.700px;top:273.300px;width:40px;height:40px;border-radius:50%;background:radial-gradient(circle,rgba(224,204,10,.86) 0,rgba(226,206,16,.84) 48%,rgba(230,212,40,.62) 66%,rgba(236,222,80,.28) 84%,rgba(240,228,120,0) 100%)"></div>
<svg class="a" style="left:376.7px;top:288.3px;" width="10" height="10" viewBox="0 0 10 10"><path d="M3.5 0.5h3v3h3v3h-3v3h-3v-3h-3v-3h3z" fill="#fff" stroke="#222" stroke-width="1"/></svg>
<div class="a" style="left:1265.0px;top:151px;width:15.0px;height:537px;background:linear-gradient(90deg,#5e5e5e,#6e6e6e 30%,#727272);"></div>
<div class="a" style="left:1277.5px;top:151px;width:2.5px;height:537px;background:#7c7c7c;"></div>
<div class="a" style="left:1265.0px;top:151px;width:12.5px;height:12px;background:#585858;"></div>
<div class="a" style="left:1267.0px;top:155.5px;width:0;height:0;border-left:4px solid transparent;border-right:4px solid transparent;border-bottom:4.5px solid #161616"></div>
<div class="a" style="left:1265.0px;top:163.5px;width:12.5px;height:44px;background:linear-gradient(90deg,#7e7e7e,#8c8c8c 40%,#808080);border:1px solid #585858;border-radius:1.5px"></div>
<div class="a" style="left:1268.5px;top:184px;width:5px;height:1px;background:#b4b4b4;"></div>
<div class="a" style="left:1268.5px;top:186px;width:5px;height:1px;background:#b4b4b4;"></div>
<div class="a" style="left:1268.5px;top:188px;width:5px;height:1px;background:#b4b4b4;"></div>
<div class="a" style="left:1267.0px;top:679.5px;width:0;height:0;border-left:4px solid transparent;border-right:4px solid transparent;border-top:4.5px solid #161616"></div>
<!-- sheet tabs -->
<div class="a" style="left:0px;top:688px;width:1280px;height:13.5px;background:linear-gradient(#4a4a4a,#5e5e5e 30%,#585858);"></div>
<div class="a" style="left:1.5px;top:689px;width:47.5px;height:12.5px;background:linear-gradient(#6a6a6a,#747474);"></div>
<div class="a" style="left:4px;top:691.5px;width:1.2px;height:6.5px;background:#b0b0b0;"></div>
<div class="a" style="left:5.5px;top:691.5999999999999px;width:0;height:0;border-top:3.2px solid transparent;border-bottom:3.2px solid transparent;border-right:4.2px solid #b0b0b0"></div>
<div class="a" style="left:16.5px;top:691.5999999999999px;width:0;height:0;border-top:3.2px solid transparent;border-bottom:3.2px solid transparent;border-right:4.2px solid #b0b0b0"></div>
<div class="a" style="left:28px;top:691.5999999999999px;width:0;height:0;border-top:3.2px solid transparent;border-bottom:3.2px solid transparent;border-left:4.2px solid #b0b0b0"></div>
<div class="a" style="left:38.5px;top:691.5999999999999px;width:0;height:0;border-top:3.2px solid transparent;border-bottom:3.2px solid transparent;border-left:4.2px solid #b0b0b0"></div>
<div class="a" style="left:43.2px;top:691.5px;width:1.2px;height:6.5px;background:#b0b0b0;"></div>
<svg class="a" style="left:49.5px;top:688.5px;" width="50" height="13" viewBox="0 0 50 13"><path d="M0.500 0H44L37.500 12.500H0.500z" fill="#fdfdfd" stroke="#3a3a3a" stroke-width=".8"/></svg>
<div class="t" style="left:70px;top:689.20px;line-height:12px;font-size:10.5px;color:#333;font-weight:bold;transform:translateX(-50%);font-family:'Liberation Serif',serif;">Лист1</div>
<svg class="a" style="left:92px;top:689px;" width="26" height="12" viewBox="0 0 26 12"><path d="M0 12L7 0H26L19 12z" fill="#6a6a6a" stroke="#8a8a8a" stroke-width=".7"/><rect x="5.500" y="2.500" width="8" height="7" fill="#dfe8f6" stroke="#7f93bd" stroke-width=".7"/><path d="M4 1.500l2.500 1.500M4.500 4.500H7" stroke="#e8a83a" stroke-width="1"/></svg>
<div class="a" style="left:757.5px;top:689.5px;width:3px;height:11px;background:#8e8e8e;border-left:1px solid #c0c0c0;border-right:1px solid #444"></div>
<div class="a" style="left:766px;top:691.6px;width:0;height:0;border-top:3.4px solid transparent;border-bottom:3.4px solid transparent;border-right:4.4px solid #111"></div>
<div class="a" style="left:775.5px;top:689px;width:447px;height:12px;background:linear-gradient(#6e6e6e,#787878);border:1px solid #4a4a4a;border-radius:2px"></div>
<div class="a" style="left:999px;top:692.5px;width:1px;height:5px;background:#aaa;"></div>
<div class="a" style="left:1001px;top:692.5px;width:1px;height:5px;background:#aaa;"></div>
<div class="a" style="left:1003px;top:692.5px;width:1px;height:5px;background:#aaa;"></div>
<div class="a" style="left:1256px;top:691.6px;width:0;height:0;border-top:3.4px solid transparent;border-bottom:3.4px solid transparent;border-left:4.4px solid #111"></div>
<div class="a" style="left:1265.5px;top:688px;width:14.5px;height:13.5px;background:#6a6a6a;"></div>
<!-- status bar -->
<div class="a" style="left:0px;top:701.5px;width:1280px;height:18.5px;background:linear-gradient(#454545,#383838 50%,#2e2e2e);"></div>
<div class="a" style="left:0px;top:701px;width:1280px;height:1px;background:#2a2a2a;"></div>
<div class="t" style="left:5.5px;top:705.00px;line-height:12px;font-size:8.5px;color:#d4d4d4;">Готово</div>
<div class="t" style="left:44px;top:705.00px;line-height:12px;font-size:8.5px;color:#d4d4d4;">Найдено записей: 7 из 306</div>
<div class="a" style="left:156.5px;top:705px;width:1px;height:12px;background:#555;"></div>
<svg class="a" style="left:163.5px;top:705.5px;" width="11" height="9" viewBox="0 0 11 9"><rect x="0.500" y="0.500" width="10" height="8" fill="#d6e2f4" stroke="#7f93bd" stroke-width=".8"/><path d="M2 6.500l2.500-3 2 2 2-2.500" stroke="#c8442e" stroke-width="1" fill="none"/></svg>
<div class="a" style="left:181.5px;top:705px;width:1px;height:12px;background:#555;"></div>
<div class="t" style="left:854px;top:705.00px;line-height:12px;font-size:8.5px;color:#d4d4d4;">Среднее: 18734,29545</div>
<div class="t" style="left:952px;top:705.00px;line-height:12px;font-size:8.5px;color:#d4d4d4;">Количество: 78</div>
<div class="t" style="left:1023.5px;top:705.00px;line-height:12px;font-size:8.5px;color:#d4d4d4;">Сумма: 824309</div>
<div class="a" style="left:1092.500px;top:703.500px;width:15.500px;height:15px;background:linear-gradient(#fde595,#fbcf58);border:1px solid #e3b24e;border-radius:2px"></div>
<svg class="a" style="left:1096px;top:707px;" width="9" height="8" viewBox="0 0 9 8"><rect x="0.500" y="0.500" width="8" height="7" fill="#fff" stroke="#7a6a3a" stroke-width=".8"/><path d="M3.200 0.500V7.500M5.800 0.500V7.500M0.500 2.800H8.500M0.500 5.200H8.500" stroke="#7a6a3a" stroke-width=".7"/></svg>
<svg class="a" style="left:1110.5px;top:706.5px;" width="10" height="9" viewBox="0 0 10 9"><rect x="0.500" y="0.500" width="9" height="8" fill="#e8e8e8" stroke="#bdbdbd" stroke-width=".8"/><rect x="2.800" y="2.500" width="4.400" height="4" fill="#5a6a8a"/></svg>
<svg class="a" style="left:1126.5px;top:706.5px;" width="10" height="9" viewBox="0 0 10 9"><rect x="0.500" y="0.500" width="9" height="8" fill="#e8e8e8" stroke="#bdbdbd" stroke-width=".8"/><path d="M3.500 0.500V6M6.500 0.500V6" stroke="#333" stroke-width="1.300"/></svg>
<div class="t" style="left:1145px;top:705.00px;line-height:12px;font-size:8.5px;color:#d4d4d4;">70%</div>
<div class="a" style="left:1168px;top:705px;width:12px;height:12px;border-radius:50%;background:radial-gradient(circle at 40% 35%,#b5b5b5,#7e7e7e);border:1px solid #5a5a5a"></div>
<div class="a" style="left:1171px;top:710.3px;width:6px;height:1.6px;background:#3a3a3a;"></div>
<div class="a" style="left:1183px;top:710.5px;width:80px;height:1px;background:#4c4c4c;"></div>
<div class="a" style="left:1183px;top:711.5px;width:80px;height:1px;background:#2a2a2a;"></div>
<div class="a" style="left:1222.5px;top:707px;width:1px;height:8px;background:#4e4e4e;"></div>
<svg class="a" style="left:1207px;top:705.5px;" width="7" height="11" viewBox="0 0 7 11"><path d="M0.500 0.500H6.500V7L3.500 10.500L0.500 7z" fill="#a8a8a8" stroke="#5e5e5e" stroke-width=".8"/></svg>
<div class="a" style="left:1265px;top:705px;width:12px;height:12px;border-radius:50%;background:radial-gradient(circle at 40% 35%,#b5b5b5,#7e7e7e);border:1px solid #5a5a5a"></div>
<div class="a" style="left:1268px;top:710.3px;width:6px;height:1.6px;background:#2a2a2a;"></div>
<div class="a" style="left:1270.2px;top:708px;width:1.6px;height:6px;background:#2a2a2a;"></div>

</div>
</body></html>
